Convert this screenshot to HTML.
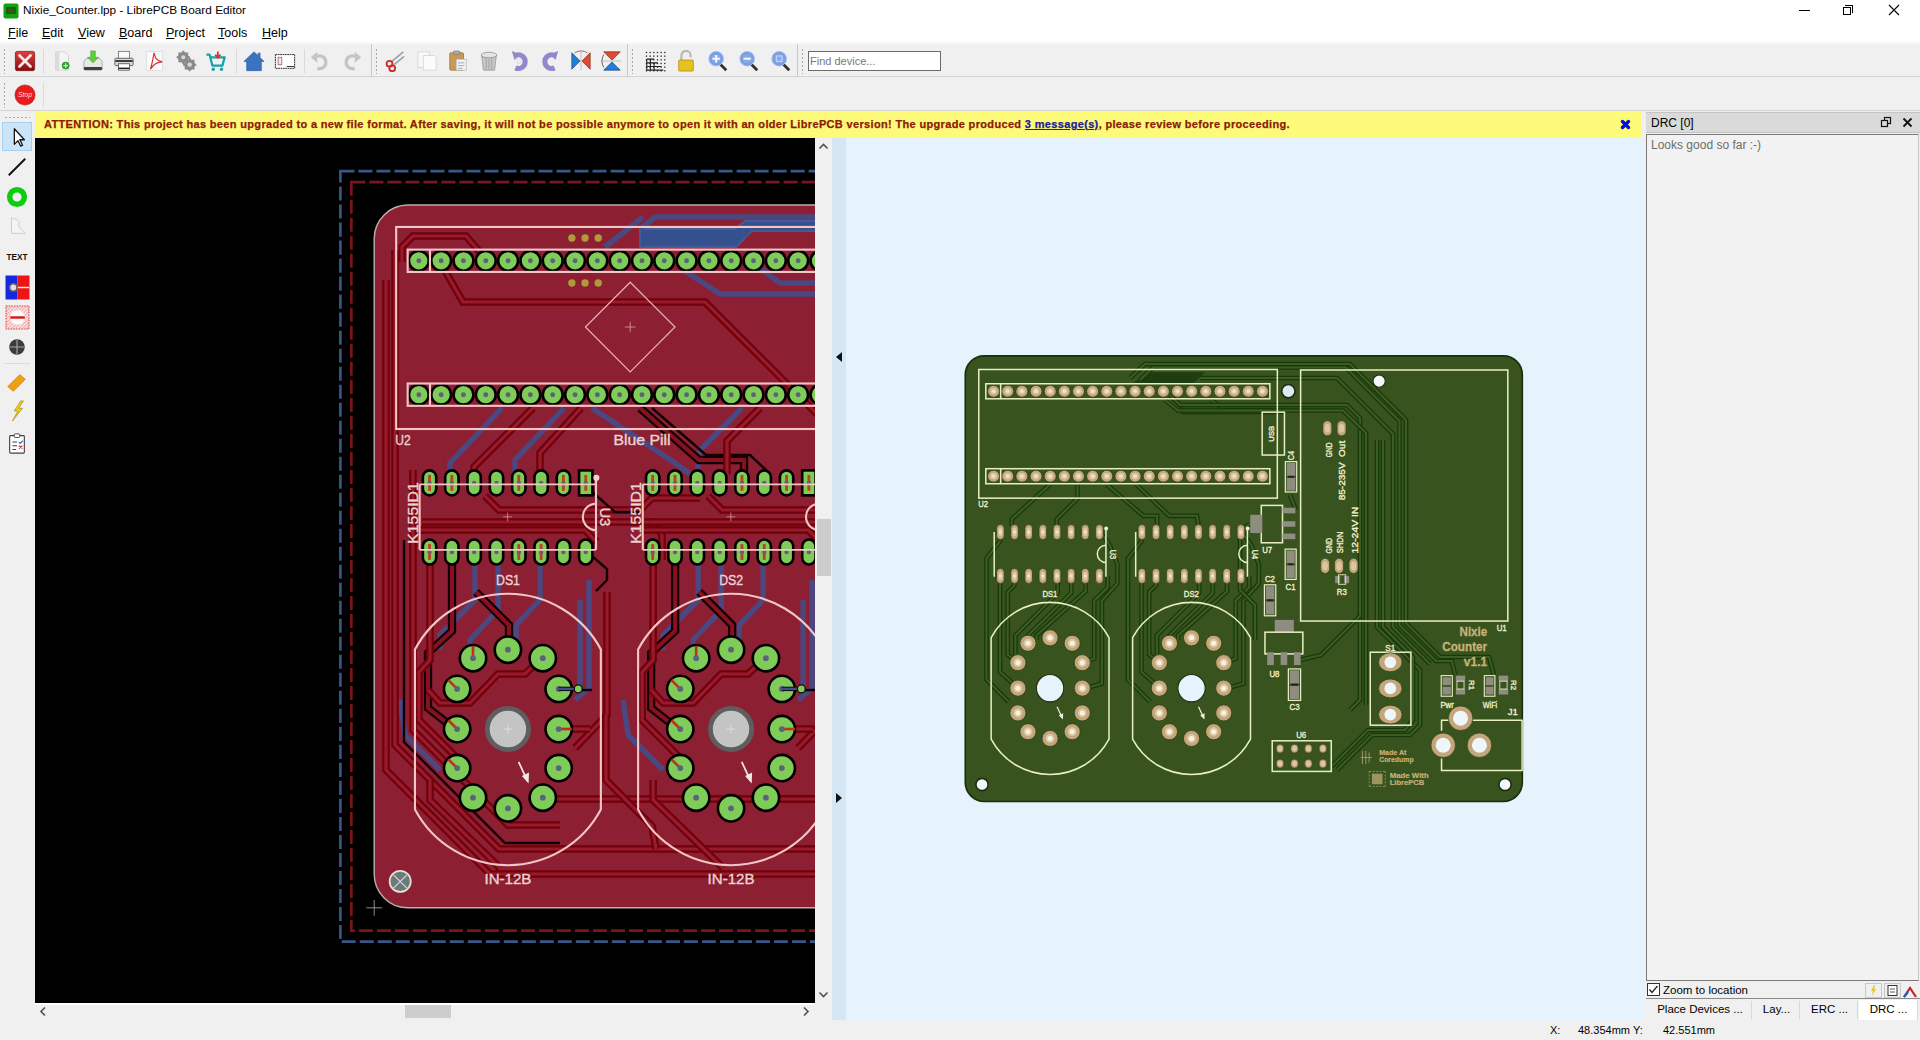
<!DOCTYPE html><html><head><meta charset="utf-8"><title>LibrePCB</title><style>
*{box-sizing:border-box}
html,body{margin:0;padding:0}
body{width:1920px;height:1040px;overflow:hidden;position:relative;background:#f0f0f0;font-family:"Liberation Sans",sans-serif;font-size:12px;color:#000}
.a{position:absolute}
.t{position:absolute;white-space:nowrap;line-height:1}
u{text-decoration:underline}
.grip{position:absolute;width:3px;background-image:radial-gradient(circle,#a8a8a8 0.8px,transparent 1.1px);background-size:3px 4px}
.gripx{position:absolute;height:3px;background-image:radial-gradient(circle,#a8a8a8 0.8px,transparent 1.1px);background-size:4px 3px}
.sep{position:absolute;width:1px;background:#dadada}
</style></head><body>
<div class="a" style="left:0;top:0;width:1920px;height:43px;background:#fff"></div>
<div class="a" style="left:0;top:41px;width:1920px;height:4px;background:linear-gradient(#fff,#f0f0f0)"></div>
<svg class="a" style="left:3px;top:3px" width="16" height="16"><rect x="0.5" y="0.5" width="15" height="15" rx="2" fill="#12a012"/><rect x="3" y="4" width="10" height="7" fill="#0a6a0a"/><rect x="5" y="6" width="6" height="3" fill="#7a3a1a"/></svg>
<div class="t" id="ttl" style="left:23px;top:5px;font-size:11.8px;color:#000">Nixie_Counter.lpp - LibrePCB Board Editor</div>
<div class="a" style="left:1799px;top:10px;width:11px;height:1px;background:#000"></div>
<div class="a" style="left:1845px;top:5px;width:8px;height:8px;border-top:1px solid #000;border-right:1px solid #000"></div>
<div class="a" style="left:1843px;top:7px;width:8px;height:8px;border:1px solid #000;background:#fff"></div>
<svg class="a" style="left:1888px;top:4px" width="12" height="12"><path d="M1 1L11 11M11 1L1 11" stroke="#000" stroke-width="1.1"/></svg>
<div class="t" style="left:8px;top:27px;font-size:12.5px"><u>F</u>ile</div>
<div class="t" style="left:42px;top:27px;font-size:12.5px"><u>E</u>dit</div>
<div class="t" style="left:78px;top:27px;font-size:12.5px"><u>V</u>iew</div>
<div class="t" style="left:119px;top:27px;font-size:12.5px"><u>B</u>oard</div>
<div class="t" style="left:166px;top:27px;font-size:12.5px"><u>P</u>roject</div>
<div class="t" style="left:218px;top:27px;font-size:12.5px"><u>T</u>ools</div>
<div class="t" style="left:262px;top:27px;font-size:12.5px"><u>H</u>elp</div>
<div class="a" style="left:0;top:76px;width:1920px;height:1px;background:#d4d4d4"></div>
<div class="a" style="left:0;top:110px;width:1920px;height:1px;background:#d4d4d4"></div>
<div class="grip" style="left:3px;top:48px;height:26px"></div>
<div class="grip" style="left:3px;top:82px;height:26px"></div>
<svg class="a" style="left:14.0px;top:50.0px" width="22" height="22" viewBox="0 0 24 24"><defs><linearGradient id="gc" x1="0" y1="0" x2="0" y2="1"><stop offset="0" stop-color="#e04040"/><stop offset="1" stop-color="#8a0c0c"/></linearGradient></defs>
<rect x="1.5" y="1.5" width="21" height="21" rx="2" fill="url(#gc)" stroke="#7a1010" stroke-width="0.8"/>
<path d="M6,6 L18,18 M18,6 L6,18" stroke="#f4eaea" stroke-width="3" stroke-linecap="round"/></svg>
<svg class="a" style="left:51.0px;top:50.0px" width="22" height="22" viewBox="0 0 24 24"><path d="M5,2 H15 L19,6 V22 H5 Z" fill="#f4f4f4" stroke="#c8c8c8" stroke-width="0.8"/>
<rect x="5" y="2" width="4" height="20" fill="#dcdcdc"/>
<circle cx="16" cy="17" r="4.2" fill="#2ea02e"/><path d="M16,14.5v5M13.5,17h5" stroke="#bff0bf" stroke-width="1.3"/></svg>
<svg class="a" style="left:82.0px;top:50.0px" width="22" height="22" viewBox="0 0 24 24"><path d="M2,15 Q2,9 7,9 H17 Q22,9 22,15 V21 H2 Z" fill="#e8e8e8" stroke="#9a9a9a" stroke-width="0.8"/>
<rect x="2" y="18.5" width="20" height="3.5" rx="1.2" fill="#404040"/>
<path d="M9.5,1 H14.5 V8 H18 L12,14 L6,8 H9.5 Z" fill="#5cd03c" stroke="#3a9a20" stroke-width="0.6"/></svg>
<svg class="a" style="left:113.0px;top:50.0px" width="22" height="22" viewBox="0 0 24 24"><rect x="6" y="1.5" width="12" height="8" fill="#fafafa" stroke="#707070" stroke-width="0.9"/>
<rect x="2" y="9" width="20" height="8" rx="1" fill="#d8d8d8" stroke="#505050" stroke-width="0.9"/>
<rect x="2.5" y="11" width="19" height="2" fill="#303030"/>
<rect x="6" y="15" width="12" height="7" fill="#ffffff" stroke="#505050" stroke-width="0.9"/>
<path d="M6,20h12" stroke="#202020" stroke-width="1.6"/></svg>
<svg class="a" style="left:144.0px;top:50.0px" width="22" height="22" viewBox="0 0 24 24"><rect x="3" y="1.5" width="17" height="21" fill="#fbfbfb" stroke="#d8d8d8" stroke-width="0.8"/>
<path d="M7,21 C9,15 10,8 11,3 C12,8 13,12 20,13 C14,13 10,16 7,21 Z" fill="none" stroke="#d03030" stroke-width="1.3"/></svg>
<svg class="a" style="left:175.0px;top:50.0px" width="22" height="22" viewBox="0 0 24 24"><g fill="#8a8a8a"><circle cx="9" cy="8" r="6"/><circle cx="16" cy="16" r="6"/></g>
<g fill="#d8d8d8"><circle cx="9" cy="8" r="2.2"/><circle cx="16" cy="16" r="2.4"/></g>
<g stroke="#8a8a8a" stroke-width="2.2"><path d="M9,0.8v14.4M1.8,8h14.4M4,3l10,10M14,3L4,13"/><path d="M16,8.8v14.4M8.8,16h14.4M11,11l10,10M21,11l-10,10"/></g>
<g fill="#d8d8d8"><circle cx="9" cy="8" r="2.2"/><circle cx="16" cy="16" r="2.4"/></g></svg>
<svg class="a" style="left:205.0px;top:50.0px" width="22" height="22" viewBox="0 0 24 24"><path d="M1.5,5 H5 L8,17 H19 L21.5,8 H6" fill="none" stroke="#18a0a8" stroke-width="2.4" stroke-linejoin="round"/>
<circle cx="9" cy="21" r="1.8" fill="#18a0a8"/><circle cx="18" cy="21" r="1.8" fill="#18a0a8"/>
<path d="M14,1.5 V7 M11.2,5 L14,8.5 L16.8,5" fill="none" stroke="#e03838" stroke-width="2"/></svg>
<svg class="a" style="left:243.0px;top:50.0px" width="22" height="22" viewBox="0 0 24 24"><path d="M12,2 L23,12.5 H20 V22.5 H4 V12.5 H1 Z" fill="#3a74c0" stroke="#2a5aa0" stroke-width="0.7"/>
<rect x="16" y="3" width="3" height="6" fill="#3a74c0"/></svg>
<svg class="a" style="left:274.0px;top:50.0px" width="22" height="22" viewBox="0 0 24 24"><rect x="1.5" y="5" width="21" height="15" fill="#fff" stroke="#222" stroke-width="1" stroke-dasharray="2 0.6"/>
<rect x="4.5" y="8" width="4" height="8" fill="#f4e8ec" stroke="#a07080" stroke-width="1"/>
<path d="M14,18h8" stroke="#222" stroke-width="1"/></svg>
<svg class="a" style="left:309.0px;top:50.0px" width="22" height="22" viewBox="0 0 24 24"><path d="M7,8 A7,7 0 1 1 9,20" fill="none" stroke="#c4c4c4" stroke-width="3.5"/>
<path d="M2,8 L9,2 V14 Z" fill="#c4c4c4"/></svg>
<svg class="a" style="left:341.0px;top:50.0px" width="22" height="22" viewBox="0 0 24 24"><path d="M17,8 A7,7 0 1 0 15,20" fill="none" stroke="#c4c4c4" stroke-width="3.5"/>
<path d="M22,8 L15,2 V14 Z" fill="#c4c4c4"/></svg>
<svg class="a" style="left:384.0px;top:50.0px" width="22" height="22" viewBox="0 0 24 24"><path d="M8,13 L21,2 M11,16 L22,7" stroke="#9aa0b0" stroke-width="1.8"/>
<circle cx="6" cy="15" r="3.2" fill="none" stroke="#d02828" stroke-width="2"/>
<circle cx="9" cy="20" r="3.2" fill="none" stroke="#d02828" stroke-width="2"/></svg>
<svg class="a" style="left:416.0px;top:50.0px" width="22" height="22" viewBox="0 0 24 24"><rect x="2" y="2" width="13" height="17" fill="#f8f8f8" stroke="#d4d4d4" stroke-width="0.9"/>
<path d="M8,6 H20 L22,8 V22 H8 Z" fill="#fbfbfb" stroke="#d4d4d4" stroke-width="0.9"/></svg>
<svg class="a" style="left:447.0px;top:50.0px" width="22" height="22" viewBox="0 0 24 24"><rect x="3" y="3" width="15" height="19" rx="1" fill="#c89a58" stroke="#9a7038" stroke-width="0.8"/>
<rect x="7" y="1" width="7" height="4" rx="1" fill="#a8a8a8" stroke="#707070" stroke-width="0.6"/>
<rect x="10" y="10" width="11" height="12" fill="#f2f2f2" stroke="#b0b0b0" stroke-width="0.7"/>
<path d="M12,14h7M12,17h7M12,20h5" stroke="#8aa0c0" stroke-width="0.9"/></svg>
<svg class="a" style="left:478.0px;top:50.0px" width="22" height="22" viewBox="0 0 24 24"><path d="M4,6 L6,22 H18 L20,6 Z" fill="#c8c8c8" stroke="#909090" stroke-width="0.8"/>
<ellipse cx="12" cy="5.5" rx="8.5" ry="3" fill="#e4e4e4" stroke="#8a8a8a" stroke-width="0.8"/>
<path d="M9,9v12M12,9v12M15,9v12" stroke="#a0a0a0" stroke-width="1"/></svg>
<svg class="a" style="left:509.0px;top:50.0px" width="22" height="22" viewBox="0 0 24 24"><path d="M8,5.5 A7.5,7.5 0 1 1 7,19.5" fill="none" stroke="#9488cc" stroke-width="5.5"/>
<path d="M8,12 A3,3 0 1 0 8,11" fill="none" stroke="#d8d0f0" stroke-width="1"/>
<path d="M3,1 L12,4.5 L6,11 Z" fill="#9488cc"/></svg>
<svg class="a" style="left:539.0px;top:50.0px" width="22" height="22" viewBox="0 0 24 24"><path d="M16,5.5 A7.5,7.5 0 1 0 17,19.5" fill="none" stroke="#9488cc" stroke-width="5.5"/>
<path d="M21,1 L12,4.5 L18,11 Z" fill="#9488cc"/></svg>
<svg class="a" style="left:570.0px;top:50.0px" width="22" height="22" viewBox="0 0 24 24"><path d="M2,3 L11,12 L2,21 Z" fill="#1e7ed8" stroke="#204a80" stroke-width="0.8"/>
<path d="M22,3 L13,12 L22,21 Z" fill="#e04a32" stroke="#803020" stroke-width="0.8"/>
<path d="M12,2v20" stroke="#b0b0b0" stroke-width="0.8"/><path d="M5,3 Q12,-1 19,3" fill="none" stroke="#804030" stroke-width="0.8"/></svg>
<svg class="a" style="left:601.0px;top:50.0px" width="22" height="22" viewBox="0 0 24 24"><path d="M3,2 L12,11 L21,2 Z" fill="#e04a32" stroke="#803020" stroke-width="0.8"/>
<path d="M3,22 L12,13 L21,22 Z" fill="#1e7ed8" stroke="#204a80" stroke-width="0.8"/>
<path d="M2,12h20" stroke="#b0b0b0" stroke-width="0.8"/><path d="M3,19 Q-1,12 3,5" fill="none" stroke="#303030" stroke-width="0.8"/></svg>
<svg class="a" style="left:644.0px;top:50.0px" width="22" height="22" viewBox="0 0 24 24"><g fill="#202020"><rect x="2" y="2" width="1.4" height="1.4"/><rect x="2" y="6" width="1.4" height="1.4"/><rect x="2" y="10" width="1.4" height="1.4"/><rect x="2" y="14" width="1.4" height="1.4"/><rect x="2" y="18" width="1.4" height="1.4"/><rect x="2" y="22" width="1.4" height="1.4"/><rect x="6" y="2" width="1.4" height="1.4"/><rect x="6" y="6" width="1.4" height="1.4"/><rect x="6" y="10" width="1.4" height="1.4"/><rect x="6" y="14" width="1.4" height="1.4"/><rect x="6" y="18" width="1.4" height="1.4"/><rect x="6" y="22" width="1.4" height="1.4"/><rect x="10" y="2" width="1.4" height="1.4"/><rect x="10" y="6" width="1.4" height="1.4"/><rect x="10" y="10" width="1.4" height="1.4"/><rect x="10" y="14" width="1.4" height="1.4"/><rect x="10" y="18" width="1.4" height="1.4"/><rect x="10" y="22" width="1.4" height="1.4"/><rect x="14" y="2" width="1.4" height="1.4"/><rect x="14" y="6" width="1.4" height="1.4"/><rect x="14" y="10" width="1.4" height="1.4"/><rect x="14" y="14" width="1.4" height="1.4"/><rect x="14" y="18" width="1.4" height="1.4"/><rect x="14" y="22" width="1.4" height="1.4"/><rect x="18" y="2" width="1.4" height="1.4"/><rect x="18" y="6" width="1.4" height="1.4"/><rect x="18" y="10" width="1.4" height="1.4"/><rect x="18" y="14" width="1.4" height="1.4"/><rect x="18" y="18" width="1.4" height="1.4"/><rect x="18" y="22" width="1.4" height="1.4"/><rect x="22" y="2" width="1.4" height="1.4"/><rect x="22" y="6" width="1.4" height="1.4"/><rect x="22" y="10" width="1.4" height="1.4"/><rect x="22" y="14" width="1.4" height="1.4"/><rect x="22" y="18" width="1.4" height="1.4"/><rect x="22" y="22" width="1.4" height="1.4"/></g>
<path d="M3,10 V22 M7,10 V22 M11,14 V22 M3,10 H11 M3,14 H15 M3,18 H19 M3,22 H21" stroke="#202020" stroke-width="1.2"/></svg>
<svg class="a" style="left:675.0px;top:50.0px" width="22" height="22" viewBox="0 0 24 24"><path d="M7,11 V6 A5,5 0 0 1 17,6 V8" fill="none" stroke="#b8b8b8" stroke-width="2.4"/>
<rect x="4" y="11" width="16" height="12" rx="1" fill="#e8c020" stroke="#b08a10" stroke-width="0.8"/></svg>
<svg class="a" style="left:707.0px;top:50.0px" width="22" height="22" viewBox="0 0 24 24"><path d="M14,15 L21,22" stroke="#303030" stroke-width="3"/>
<circle cx="10" cy="9.5" r="8" fill="#7a9ee0" stroke="#a8c0f0" stroke-width="1"/>
<circle cx="10" cy="9.5" r="5" fill="#8fb0f0" opacity="0.6"/><path d="M10,5.5v8M6,9.5h8" stroke="#f4f8ff" stroke-width="2.2"/></svg>
<svg class="a" style="left:738.0px;top:50.0px" width="22" height="22" viewBox="0 0 24 24"><path d="M14,15 L21,22" stroke="#303030" stroke-width="3"/>
<circle cx="10" cy="9.5" r="8" fill="#7a9ee0" stroke="#a8c0f0" stroke-width="1"/>
<circle cx="10" cy="9.5" r="5" fill="#8fb0f0" opacity="0.6"/><path d="M6,9.5h8" stroke="#f4f8ff" stroke-width="2.2"/></svg>
<svg class="a" style="left:770.0px;top:50.0px" width="22" height="22" viewBox="0 0 24 24"><path d="M14,15 L21,22" stroke="#303030" stroke-width="3"/>
<circle cx="10" cy="9.5" r="8" fill="#7a9ee0" stroke="#a8c0f0" stroke-width="1"/>
<circle cx="10" cy="9.5" r="5" fill="#8fb0f0" opacity="0.6"/><rect x="7" y="6.5" width="6" height="6" fill="none" stroke="#c0d4ff" stroke-width="1.2"/></svg>
<div class="sep" style="left:43px;top:49px;height:24px"></div>
<div class="sep" style="left:236px;top:49px;height:24px"></div>
<div class="sep" style="left:304px;top:49px;height:24px"></div>
<div class="a" style="left:371px;top:44px;width:1px;height:33px;background:#c8c8c8"></div>
<div class="grip" style="left:375px;top:48px;height:26px"></div>
<div class="a" style="left:627px;top:44px;width:1px;height:33px;background:#c8c8c8"></div>
<div class="grip" style="left:631px;top:48px;height:26px"></div>
<div class="a" style="left:797px;top:44px;width:1px;height:33px;background:#c8c8c8"></div>
<div class="grip" style="left:801px;top:48px;height:26px"></div>
<div class="sep" style="left:43px;top:83px;height:24px"></div>
<svg class="a" style="left:14.0px;top:83.5px" width="22" height="22" viewBox="0 0 24 24"><circle cx="12" cy="12" r="11" fill="#e81c1c" stroke="#b01010" stroke-width="0.6"/>
<text x="12" y="14.5" font-size="7.5" fill="#ffd8d8" text-anchor="middle" font-family="Liberation Sans" font-style="italic">Stop</text></svg>
<div class="a" style="left:808px;top:51px;width:133px;height:20px;background:#fff;border:1px solid #6a6a6a"></div>
<div class="t" style="left:810px;top:56px;font-size:11px;color:#777">Find device...</div>
<div class="gripx" style="left:4px;top:116px;width:26px"></div>
<div class="a" style="left:2px;top:122px;width:30px;height:29px;background:#cce4f7;border:1px solid #a8d0f0"></div>
<svg class="a" style="left:7.0px;top:126.0px" width="22" height="22" viewBox="0 0 24 24"><path d="M8,3 V20 L12,16 L15,22 L17,21 L14,15 L19,15 Z" fill="#fff" stroke="#111" stroke-width="1.4" stroke-linejoin="round"/></svg>
<svg class="a" style="left:6.0px;top:156.0px" width="22" height="22" viewBox="0 0 24 24"><path d="M3,21 L21,3" stroke="#111" stroke-width="2.2"/></svg>
<svg class="a" style="left:6.0px;top:186.0px" width="22" height="22" viewBox="0 0 24 24"><circle cx="12" cy="12" r="8" fill="none" stroke="#0ecc0e" stroke-width="6"/></svg>
<svg class="a" style="left:6.0px;top:216.0px" width="22" height="22" viewBox="0 0 24 24"><path d="M6,2 V19 H21 L14,12 V6 L12,4 Z" fill="#f4f4f4" stroke="#cacaca" stroke-width="1"/></svg>
<svg class="a" style="left:6.0px;top:245.0px" width="22" height="22" viewBox="0 0 24 24"><text x="12" y="16" font-size="9" font-weight="bold" fill="#111" text-anchor="middle" font-family="Liberation Sans">TEXT</text></svg>
<svg class="a" style="left:4.5px;top:274.5px" width="25" height="25" viewBox="0 0 24 24"><rect x="0.5" y="0.5" width="11.5" height="23" fill="#1428e0"/><rect x="12" y="0.5" width="11.5" height="23" fill="#ee1414"/>
<path d="M9,12 H23" stroke="#f0f0f0" stroke-width="1.4"/><circle cx="8" cy="12" r="3.6" fill="#e0e0e0" stroke="#606060" stroke-width="1.6"/></svg>
<svg class="a" style="left:4.5px;top:304.5px" width="25" height="25" viewBox="0 0 24 24"><defs><pattern id="hatch" width="2.5" height="2.5" patternUnits="userSpaceOnUse" patternTransform="rotate(45)"><rect width="2.5" height="2.5" fill="#f8dede"/><path d="M0,0V2.5" stroke="#e07070" stroke-width="0.8"/></pattern></defs>
<rect x="1" y="1" width="22" height="22" fill="url(#hatch)" stroke="#e04040" stroke-width="1" stroke-dasharray="1.5 1"/>
<circle cx="12" cy="12" r="7" fill="#fafafa"/><rect x="5" y="10.8" width="14" height="2.4" fill="#d02020"/></svg>
<svg class="a" style="left:6.0px;top:336.0px" width="22" height="22" viewBox="0 0 24 24"><circle cx="12" cy="12" r="8.5" fill="#3c3c3c"/><path d="M12,4v16M4,12h16" stroke="#a8a8a8" stroke-width="1.2"/></svg>
<svg class="a" style="left:6.0px;top:371.0px" width="22" height="22" viewBox="0 0 24 24"><path d="M2,17 L15,4 L21,9 L8,22 Z" fill="#f0a010" stroke="#c07800" stroke-width="0.8"/></svg>
<svg class="a" style="left:6.0px;top:400.0px" width="22" height="22" viewBox="0 0 24 24"><path d="M16,1 L9,12 H13 L7,23 L18,9 H14 L19,1 Z" fill="#f0d020" stroke="#a08010" stroke-width="0.7"/></svg>
<svg class="a" style="left:6.0px;top:432.0px" width="22" height="22" viewBox="0 0 24 24"><rect x="4" y="4" width="16" height="19" rx="1" fill="#fff" stroke="#404040" stroke-width="1.2"/>
<rect x="9" y="2" width="6" height="4" rx="1" fill="#fff" stroke="#404040" stroke-width="1"/>
<path d="M7,11h5M7,15h5M7,19h4" stroke="#404040" stroke-width="1.1"/><path d="M14,11l1.5,1.5 3-3" stroke="#2060c0" stroke-width="1.1" fill="none"/><path d="M14,15l4,3M18,15l-4,3" stroke="#d02020" stroke-width="1.1"/></svg>
<div class="a" style="left:4px;top:363px;width:26px;height:1px;background:#dcdcdc"></div>
<div class="a" style="left:35px;top:112px;width:1606px;height:26px;background:#fdfa7a"></div>
<div class="t" id="ban" style="left:44px;top:119px;font-size:11px;font-weight:bold;color:#8c1a04;letter-spacing:0.34px;-webkit-text-stroke:0.25px #8c1a04">ATTENTION: This project has been upgraded to a new file format. After saving, it will not be possible anymore to open it with an older LibrePCB version! The upgrade produced <u style="color:#1c1c98;-webkit-text-stroke:0.25px #1c1c98">3 message(s)</u>, please review before proceeding.</div>
<svg class="a" style="left:1620px;top:119px" width="11" height="11"><path d="M2.5,2.5L8.5,8.5M8.5,2.5L2.5,8.5" stroke="#0010d8" stroke-width="3.4" stroke-linecap="round"/></svg>
<div class="a" style="left:35px;top:138px;width:780px;height:865px;background:#000;overflow:hidden" id="lc"><svg class="a" style="left:0;top:0" width="780" height="865">
<g transform="translate(339.2,67) scale(8.785)">
<rect x="-3.85" y="-3.85" width="107.7" height="87.7" fill="none" stroke="#3a5684" stroke-width="0.3" stroke-dasharray="1.6 0.45"/>
<rect x="-2.6" y="-2.6" width="105.2" height="85.2" fill="none" stroke="#7c1519" stroke-width="0.3" stroke-dasharray="1.6 0.45"/>
<path d="M3.85,0 H96.15 A3.85,3.85 0 0 1 100,3.85 V76.15 A3.85,3.85 0 0 1 96.15,80 H3.85 A3.85,3.85 0 0 1 0,76.15 V3.85 A3.85,3.85 0 0 1 3.85,0 Z" fill="#8d1f33" stroke="#b9b0b0" stroke-width="0.16"/>
<path d="M30.256,4.781 L30.256,2.732 L41.070,2.732 L42.208,1.821 L50.746,1.821 L50.746,2.960 L43.005,2.960 L41.184,4.781Z" fill="#34508e" stroke="#4a5a96" stroke-width="0.2"/>
<path d="M26.272,4.781 L30.598,1.366" fill="none" stroke="#3f4f8e" stroke-opacity="0.85" stroke-width="0.62"/>
<path d="M35.037,7.285 L39.363,10.131 L50.746,10.131" fill="none" stroke="#3f4f8e" stroke-opacity="0.85" stroke-width="0.62"/>
<path d="M44.030,7.285 L46.192,8.879 L50.746,8.879" fill="none" stroke="#3f4f8e" stroke-opacity="0.85" stroke-width="0.62"/>
<path d="M50.746,1.366 L31.964,1.366 L30.256,2.732" fill="none" stroke="#3f4f8e" stroke-opacity="0.85" stroke-width="0.62"/>
<path d="M14.548,23.108 L8.628,29.368 L8.628,30.393" fill="none" stroke="#3f4f8e" stroke-opacity="0.85" stroke-width="0.62"/>
<path d="M21.605,23.108 L16.027,29.027 L16.027,30.620" fill="none" stroke="#3f4f8e" stroke-opacity="0.85" stroke-width="0.62"/>
<path d="M24.792,23.108 L34.240,29.368 L35.948,30.620" fill="none" stroke="#3f4f8e" stroke-opacity="0.85" stroke-width="0.62"/>
<path d="M41.867,23.108 L37.086,27.888 L36.744,30.620" fill="none" stroke="#3f4f8e" stroke-opacity="0.85" stroke-width="0.62"/>
<path d="M24.451,42.686 L24.451,54.980 L22.857,56.346" fill="none" stroke="#3f4f8e" stroke-opacity="0.85" stroke-width="0.62"/>
<path d="M23.426,44.963 L23.426,55.208" fill="none" stroke="#3f4f8e" stroke-opacity="0.85" stroke-width="0.62"/>
<path d="M11.474,40.637 L11.474,44.963 L7.490,48.947 L7.490,50.655" fill="none" stroke="#3f4f8e" stroke-opacity="0.85" stroke-width="0.62"/>
<path d="M14.092,40.637 L14.092,46.101 L10.905,49.516 L10.905,50.655" fill="none" stroke="#3f4f8e" stroke-opacity="0.85" stroke-width="0.62"/>
<path d="M18.873,40.637 L18.873,44.963 L16.141,47.809 L16.141,50.085" fill="none" stroke="#3f4f8e" stroke-opacity="0.85" stroke-width="0.62"/>
<path d="M7.490,64.314 L3.506,60.330 L2.937,56.346" fill="none" stroke="#3f4f8e" stroke-opacity="0.85" stroke-width="0.62"/>
<path d="M49.851,42.686 L49.851,54.980 L48.257,56.346" fill="none" stroke="#3f4f8e" stroke-opacity="0.85" stroke-width="0.62"/>
<path d="M48.826,44.963 L48.826,55.208" fill="none" stroke="#3f4f8e" stroke-opacity="0.85" stroke-width="0.62"/>
<path d="M36.874,40.637 L36.874,44.963 L32.890,48.947 L32.890,50.655" fill="none" stroke="#3f4f8e" stroke-opacity="0.85" stroke-width="0.62"/>
<path d="M39.492,40.637 L39.492,46.101 L36.305,49.516 L36.305,50.655" fill="none" stroke="#3f4f8e" stroke-opacity="0.85" stroke-width="0.62"/>
<path d="M44.273,40.637 L44.273,44.963 L41.541,47.809 L41.541,50.085" fill="none" stroke="#3f4f8e" stroke-opacity="0.85" stroke-width="0.62"/>
<path d="M32.890,64.314 L28.906,60.330 L28.337,56.346" fill="none" stroke="#3f4f8e" stroke-opacity="0.85" stroke-width="0.62"/>
<path d="M12.612,6.033 L10.450,3.529 L4.417,3.529 L3.164,4.781 L3.164,6.488" fill="none" stroke="#72000a" stroke-width="0.86"/>
<path d="M12.612,6.033 L10.450,3.529 L4.417,3.529 L3.164,4.781 L3.164,6.488" fill="none" stroke="#961b2d" stroke-width="0.36"/>
<path d="M7.490,6.488 L10.108,11.042 L37.655,11.042 L50.746,24.132" fill="none" stroke="#72000a" stroke-width="0.86"/>
<path d="M7.490,6.488 L10.108,11.042 L37.655,11.042 L50.746,24.132" fill="none" stroke="#961b2d" stroke-width="0.36"/>
<path d="M1.343,8.537 L1.343,64.314 L13.182,76.153 L50.746,76.153" fill="none" stroke="#72000a" stroke-width="0.86"/>
<path d="M1.343,8.537 L1.343,64.314 L13.182,76.153 L50.746,76.153" fill="none" stroke="#961b2d" stroke-width="0.36"/>
<path d="M2.368,5.122 L2.368,61.468 L14.206,73.307 L50.746,73.307" fill="none" stroke="#72000a" stroke-width="0.86"/>
<path d="M2.368,5.122 L2.368,61.468 L14.206,73.307 L50.746,73.307" fill="none" stroke="#961b2d" stroke-width="0.36"/>
<path d="M3.392,38.133 L3.392,61.127 L14.889,72.624 L21.150,72.624" fill="none" stroke="#120004" stroke-width="0.28"/>
<path d="M4.417,30.165 L4.417,59.761 L15.231,70.575 L21.150,70.575" fill="none" stroke="#72000a" stroke-width="0.86"/>
<path d="M4.417,30.165 L4.417,59.761 L15.231,70.575 L21.150,70.575" fill="none" stroke="#961b2d" stroke-width="0.36"/>
<path d="M18.076,23.108 L11.360,29.824 L11.360,30.620" fill="none" stroke="#72000a" stroke-width="0.86"/>
<path d="M18.076,23.108 L11.360,29.824 L11.360,30.620" fill="none" stroke="#961b2d" stroke-width="0.36"/>
<path d="M23.540,23.108 L18.873,28.230 L18.873,30.620" fill="none" stroke="#72000a" stroke-width="0.86"/>
<path d="M23.540,23.108 L18.873,28.230 L18.873,30.620" fill="none" stroke="#961b2d" stroke-width="0.36"/>
<path d="M30.256,23.108 L36.972,29.027 L42.094,29.027 L42.094,30.620" fill="none" stroke="#120004" stroke-width="0.95"/>
<path d="M30.256,23.108 L36.972,29.027 L42.094,29.027 L42.094,30.620" fill="none" stroke="#8a1020" stroke-width="0.45"/>
<path d="M31.622,23.108 L37.769,28.458 L42.777,28.458 L44.599,30.165" fill="none" stroke="#120004" stroke-width="0.28"/>
<path d="M43.916,23.108 L40.159,26.864 L40.159,30.620" fill="none" stroke="#72000a" stroke-width="0.86"/>
<path d="M43.916,23.108 L40.159,26.864 L40.159,30.620" fill="none" stroke="#961b2d" stroke-width="0.36"/>
<path d="M12.612,33.125 L14.206,34.718 L30.256,34.718 L31.622,33.352 L37.086,33.352" fill="none" stroke="#72000a" stroke-width="0.86"/>
<path d="M12.612,33.125 L14.206,34.718 L30.256,34.718 L31.622,33.352 L37.086,33.352" fill="none" stroke="#961b2d" stroke-width="0.36"/>
<path d="M5.441,36.084 L31.394,36.084 L32.760,37.450 L32.760,40.410" fill="none" stroke="#72000a" stroke-width="0.86"/>
<path d="M5.441,36.084 L31.394,36.084 L32.760,37.450 L32.760,40.410" fill="none" stroke="#961b2d" stroke-width="0.36"/>
<path d="M5.213,36.995 L23.995,36.995 L25.361,38.361" fill="none" stroke="#72000a" stroke-width="0.86"/>
<path d="M5.213,36.995 L23.995,36.995 L25.361,38.361" fill="none" stroke="#961b2d" stroke-width="0.36"/>
<path d="M24.109,39.385 L26.500,41.434 L26.500,42.686 L25.248,43.939" fill="none" stroke="#120004" stroke-width="0.28"/>
<path d="M24.565,32.442 L27.410,34.946 L30.256,34.946" fill="none" stroke="#120004" stroke-width="0.28"/>
<path d="M21.150,55.208 L24.792,55.208" fill="none" stroke="#120004" stroke-width="0.28"/>
<path d="M26.500,44.052 L26.500,58.054 L22.857,61.810" fill="none" stroke="#72000a" stroke-width="0.86"/>
<path d="M26.500,44.052 L26.500,58.054 L22.857,61.810" fill="none" stroke="#961b2d" stroke-width="0.36"/>
<path d="M21.150,59.647 L24.565,59.647" fill="none" stroke="#72000a" stroke-width="0.86"/>
<path d="M21.150,59.647 L24.565,59.647" fill="none" stroke="#961b2d" stroke-width="0.36"/>
<path d="M19.215,67.615 L50.746,67.615" fill="none" stroke="#72000a" stroke-width="0.86"/>
<path d="M19.215,67.615 L50.746,67.615" fill="none" stroke="#961b2d" stroke-width="0.36"/>
<path d="M26.386,58.054 L26.386,65.452 L31.622,70.689 L32.077,73.307" fill="none" stroke="#72000a" stroke-width="0.86"/>
<path d="M26.386,58.054 L26.386,65.452 L31.622,70.689 L32.077,73.307" fill="none" stroke="#961b2d" stroke-width="0.36"/>
<path d="M8.856,40.637 L8.856,48.492 L6.124,50.996 L6.124,57.257 L9.311,59.761" fill="none" stroke="#120004" stroke-width="0.95"/>
<path d="M8.856,40.637 L8.856,48.492 L6.124,50.996 L6.124,57.257 L9.311,59.761" fill="none" stroke="#8a1020" stroke-width="0.45"/>
<path d="M6.352,40.637 L6.352,51.793 L5.100,53.159 L5.100,58.623 L9.197,62.721 L9.539,64.200" fill="none" stroke="#72000a" stroke-width="0.86"/>
<path d="M6.352,40.637 L6.352,51.793 L5.100,53.159 L5.100,58.623 L9.197,62.721 L9.539,64.200" fill="none" stroke="#961b2d" stroke-width="0.36"/>
<path d="M19.101,51.565 L17.166,53.386 L14.092,53.386 L10.905,56.688 L7.490,56.688 L6.124,55.208" fill="none" stroke="#72000a" stroke-width="0.86"/>
<path d="M19.101,51.565 L17.166,53.386 L14.092,53.386 L10.905,56.688 L7.490,56.688 L6.124,55.208" fill="none" stroke="#961b2d" stroke-width="0.36"/>
<path d="M11.588,44.052 L15.344,47.809 L15.344,50.199" fill="none" stroke="#120004" stroke-width="0.95"/>
<path d="M11.588,44.052 L15.344,47.809 L15.344,50.199" fill="none" stroke="#8a1020" stroke-width="0.45"/>
<path d="M6.352,65.452 L6.352,67.729 L14.320,75.470" fill="none" stroke="#72000a" stroke-width="0.86"/>
<path d="M6.352,65.452 L6.352,67.729 L14.320,75.470" fill="none" stroke="#961b2d" stroke-width="0.36"/>
<path d="M38.012,33.125 L39.606,34.718 L55.656,34.718 L57.022,33.352 L62.486,33.352" fill="none" stroke="#72000a" stroke-width="0.86"/>
<path d="M38.012,33.125 L39.606,34.718 L55.656,34.718 L57.022,33.352 L62.486,33.352" fill="none" stroke="#961b2d" stroke-width="0.36"/>
<path d="M30.841,36.084 L56.794,36.084 L58.160,37.450 L58.160,40.410" fill="none" stroke="#72000a" stroke-width="0.86"/>
<path d="M30.841,36.084 L56.794,36.084 L58.160,37.450 L58.160,40.410" fill="none" stroke="#961b2d" stroke-width="0.36"/>
<path d="M30.613,36.995 L49.395,36.995 L50.761,38.361" fill="none" stroke="#72000a" stroke-width="0.86"/>
<path d="M30.613,36.995 L49.395,36.995 L50.761,38.361" fill="none" stroke="#961b2d" stroke-width="0.36"/>
<path d="M49.509,39.385 L51.900,41.434 L51.900,42.686 L50.648,43.939" fill="none" stroke="#120004" stroke-width="0.28"/>
<path d="M49.965,32.442 L52.810,34.946 L55.656,34.946" fill="none" stroke="#120004" stroke-width="0.28"/>
<path d="M46.550,55.208 L50.192,55.208" fill="none" stroke="#120004" stroke-width="0.28"/>
<path d="M51.900,44.052 L51.900,58.054 L48.257,61.810" fill="none" stroke="#72000a" stroke-width="0.86"/>
<path d="M51.900,44.052 L51.900,58.054 L48.257,61.810" fill="none" stroke="#961b2d" stroke-width="0.36"/>
<path d="M46.550,59.647 L49.965,59.647" fill="none" stroke="#72000a" stroke-width="0.86"/>
<path d="M46.550,59.647 L49.965,59.647" fill="none" stroke="#961b2d" stroke-width="0.36"/>
<path d="M44.615,67.615 L50.761,67.615" fill="none" stroke="#72000a" stroke-width="0.86"/>
<path d="M44.615,67.615 L50.761,67.615" fill="none" stroke="#961b2d" stroke-width="0.36"/>
<path d="M51.786,58.054 L51.786,65.452 L57.022,70.689 L57.477,73.307" fill="none" stroke="#72000a" stroke-width="0.86"/>
<path d="M51.786,58.054 L51.786,65.452 L57.022,70.689 L57.477,73.307" fill="none" stroke="#961b2d" stroke-width="0.36"/>
<path d="M34.256,40.637 L34.256,48.492 L31.524,50.996 L31.524,57.257 L34.711,59.761" fill="none" stroke="#120004" stroke-width="0.95"/>
<path d="M34.256,40.637 L34.256,48.492 L31.524,50.996 L31.524,57.257 L34.711,59.761" fill="none" stroke="#8a1020" stroke-width="0.45"/>
<path d="M31.752,40.637 L31.752,51.793 L30.500,53.159 L30.500,58.623 L34.597,62.721 L34.939,64.200" fill="none" stroke="#72000a" stroke-width="0.86"/>
<path d="M31.752,40.637 L31.752,51.793 L30.500,53.159 L30.500,58.623 L34.597,62.721 L34.939,64.200" fill="none" stroke="#961b2d" stroke-width="0.36"/>
<path d="M44.501,51.565 L42.566,53.386 L39.492,53.386 L36.305,56.688 L32.890,56.688 L31.524,55.208" fill="none" stroke="#72000a" stroke-width="0.86"/>
<path d="M44.501,51.565 L42.566,53.386 L39.492,53.386 L36.305,56.688 L32.890,56.688 L31.524,55.208" fill="none" stroke="#961b2d" stroke-width="0.36"/>
<path d="M36.988,44.052 L40.744,47.809 L40.744,50.199" fill="none" stroke="#120004" stroke-width="0.95"/>
<path d="M36.988,44.052 L40.744,47.809 L40.744,50.199" fill="none" stroke="#8a1020" stroke-width="0.45"/>
<path d="M31.752,65.452 L31.752,67.729 L39.720,75.470" fill="none" stroke="#72000a" stroke-width="0.86"/>
<path d="M31.752,65.452 L31.752,67.729 L39.720,75.470" fill="none" stroke="#961b2d" stroke-width="0.36"/>
<circle cx="5.08" cy="6.35" r="1.13" fill="#80cc58" stroke="#050000" stroke-width="0.3"/>
<circle cx="5.08" cy="6.35" r="0.28" fill="#5a6478"/>
<circle cx="7.62" cy="6.35" r="1.13" fill="#80cc58" stroke="#050000" stroke-width="0.3"/>
<circle cx="7.62" cy="6.35" r="0.28" fill="#5a6478"/>
<circle cx="10.16" cy="6.35" r="1.13" fill="#80cc58" stroke="#050000" stroke-width="0.3"/>
<circle cx="10.16" cy="6.35" r="0.28" fill="#5a6478"/>
<circle cx="12.7" cy="6.35" r="1.13" fill="#80cc58" stroke="#050000" stroke-width="0.3"/>
<circle cx="12.7" cy="6.35" r="0.28" fill="#5a6478"/>
<circle cx="15.24" cy="6.35" r="1.13" fill="#80cc58" stroke="#050000" stroke-width="0.3"/>
<circle cx="15.24" cy="6.35" r="0.28" fill="#5a6478"/>
<circle cx="17.78" cy="6.35" r="1.13" fill="#80cc58" stroke="#050000" stroke-width="0.3"/>
<circle cx="17.78" cy="6.35" r="0.28" fill="#5a6478"/>
<circle cx="20.32" cy="6.35" r="1.13" fill="#80cc58" stroke="#050000" stroke-width="0.3"/>
<circle cx="20.32" cy="6.35" r="0.28" fill="#5a6478"/>
<circle cx="22.86" cy="6.35" r="1.13" fill="#80cc58" stroke="#050000" stroke-width="0.3"/>
<circle cx="22.86" cy="6.35" r="0.28" fill="#5a6478"/>
<circle cx="25.4" cy="6.35" r="1.13" fill="#80cc58" stroke="#050000" stroke-width="0.3"/>
<circle cx="25.4" cy="6.35" r="0.28" fill="#5a6478"/>
<circle cx="27.94" cy="6.35" r="1.13" fill="#80cc58" stroke="#050000" stroke-width="0.3"/>
<circle cx="27.94" cy="6.35" r="0.28" fill="#5a6478"/>
<circle cx="30.48" cy="6.35" r="1.13" fill="#80cc58" stroke="#050000" stroke-width="0.3"/>
<circle cx="30.48" cy="6.35" r="0.28" fill="#5a6478"/>
<circle cx="33.02" cy="6.35" r="1.13" fill="#80cc58" stroke="#050000" stroke-width="0.3"/>
<circle cx="33.02" cy="6.35" r="0.28" fill="#5a6478"/>
<circle cx="35.56" cy="6.35" r="1.13" fill="#80cc58" stroke="#050000" stroke-width="0.3"/>
<circle cx="35.56" cy="6.35" r="0.28" fill="#5a6478"/>
<circle cx="38.1" cy="6.35" r="1.13" fill="#80cc58" stroke="#050000" stroke-width="0.3"/>
<circle cx="38.1" cy="6.35" r="0.28" fill="#5a6478"/>
<circle cx="40.64" cy="6.35" r="1.13" fill="#80cc58" stroke="#050000" stroke-width="0.3"/>
<circle cx="40.64" cy="6.35" r="0.28" fill="#5a6478"/>
<circle cx="43.18" cy="6.35" r="1.13" fill="#80cc58" stroke="#050000" stroke-width="0.3"/>
<circle cx="43.18" cy="6.35" r="0.28" fill="#5a6478"/>
<circle cx="45.72" cy="6.35" r="1.13" fill="#80cc58" stroke="#050000" stroke-width="0.3"/>
<circle cx="45.72" cy="6.35" r="0.28" fill="#5a6478"/>
<circle cx="48.26" cy="6.35" r="1.13" fill="#80cc58" stroke="#050000" stroke-width="0.3"/>
<circle cx="48.26" cy="6.35" r="0.28" fill="#5a6478"/>
<circle cx="50.8" cy="6.35" r="1.13" fill="#80cc58" stroke="#050000" stroke-width="0.3"/>
<circle cx="50.8" cy="6.35" r="0.28" fill="#5a6478"/>
<circle cx="53.34" cy="6.35" r="1.13" fill="#80cc58" stroke="#050000" stroke-width="0.3"/>
<circle cx="53.34" cy="6.35" r="0.28" fill="#5a6478"/>
<circle cx="5.08" cy="21.59" r="1.13" fill="#80cc58" stroke="#050000" stroke-width="0.3"/>
<circle cx="5.08" cy="21.59" r="0.28" fill="#5a6478"/>
<circle cx="7.62" cy="21.59" r="1.13" fill="#80cc58" stroke="#050000" stroke-width="0.3"/>
<circle cx="7.62" cy="21.59" r="0.28" fill="#5a6478"/>
<circle cx="10.16" cy="21.59" r="1.13" fill="#80cc58" stroke="#050000" stroke-width="0.3"/>
<circle cx="10.16" cy="21.59" r="0.28" fill="#5a6478"/>
<circle cx="12.7" cy="21.59" r="1.13" fill="#80cc58" stroke="#050000" stroke-width="0.3"/>
<circle cx="12.7" cy="21.59" r="0.28" fill="#5a6478"/>
<circle cx="15.24" cy="21.59" r="1.13" fill="#80cc58" stroke="#050000" stroke-width="0.3"/>
<circle cx="15.24" cy="21.59" r="0.28" fill="#5a6478"/>
<circle cx="17.78" cy="21.59" r="1.13" fill="#80cc58" stroke="#050000" stroke-width="0.3"/>
<circle cx="17.78" cy="21.59" r="0.28" fill="#5a6478"/>
<circle cx="20.32" cy="21.59" r="1.13" fill="#80cc58" stroke="#050000" stroke-width="0.3"/>
<circle cx="20.32" cy="21.59" r="0.28" fill="#5a6478"/>
<circle cx="22.86" cy="21.59" r="1.13" fill="#80cc58" stroke="#050000" stroke-width="0.3"/>
<circle cx="22.86" cy="21.59" r="0.28" fill="#5a6478"/>
<circle cx="25.4" cy="21.59" r="1.13" fill="#80cc58" stroke="#050000" stroke-width="0.3"/>
<circle cx="25.4" cy="21.59" r="0.28" fill="#5a6478"/>
<circle cx="27.94" cy="21.59" r="1.13" fill="#80cc58" stroke="#050000" stroke-width="0.3"/>
<circle cx="27.94" cy="21.59" r="0.28" fill="#5a6478"/>
<circle cx="30.48" cy="21.59" r="1.13" fill="#80cc58" stroke="#050000" stroke-width="0.3"/>
<circle cx="30.48" cy="21.59" r="0.28" fill="#5a6478"/>
<circle cx="33.02" cy="21.59" r="1.13" fill="#80cc58" stroke="#050000" stroke-width="0.3"/>
<circle cx="33.02" cy="21.59" r="0.28" fill="#5a6478"/>
<circle cx="35.56" cy="21.59" r="1.13" fill="#80cc58" stroke="#050000" stroke-width="0.3"/>
<circle cx="35.56" cy="21.59" r="0.28" fill="#5a6478"/>
<circle cx="38.1" cy="21.59" r="1.13" fill="#80cc58" stroke="#050000" stroke-width="0.3"/>
<circle cx="38.1" cy="21.59" r="0.28" fill="#5a6478"/>
<circle cx="40.64" cy="21.59" r="1.13" fill="#80cc58" stroke="#050000" stroke-width="0.3"/>
<circle cx="40.64" cy="21.59" r="0.28" fill="#5a6478"/>
<circle cx="43.18" cy="21.59" r="1.13" fill="#80cc58" stroke="#050000" stroke-width="0.3"/>
<circle cx="43.18" cy="21.59" r="0.28" fill="#5a6478"/>
<circle cx="45.72" cy="21.59" r="1.13" fill="#80cc58" stroke="#050000" stroke-width="0.3"/>
<circle cx="45.72" cy="21.59" r="0.28" fill="#5a6478"/>
<circle cx="48.26" cy="21.59" r="1.13" fill="#80cc58" stroke="#050000" stroke-width="0.3"/>
<circle cx="48.26" cy="21.59" r="0.28" fill="#5a6478"/>
<circle cx="50.8" cy="21.59" r="1.13" fill="#80cc58" stroke="#050000" stroke-width="0.3"/>
<circle cx="50.8" cy="21.59" r="0.28" fill="#5a6478"/>
<circle cx="53.34" cy="21.59" r="1.13" fill="#80cc58" stroke="#050000" stroke-width="0.3"/>
<circle cx="53.34" cy="21.59" r="0.28" fill="#5a6478"/>
<circle cx="22.5" cy="3.76" r="0.42" fill="#b09a3a"/>
<circle cx="24.0" cy="3.76" r="0.42" fill="#b09a3a"/>
<circle cx="25.5" cy="3.76" r="0.42" fill="#b09a3a"/>
<circle cx="22.5" cy="8.88" r="0.42" fill="#b09a3a"/>
<circle cx="24.0" cy="8.88" r="0.42" fill="#b09a3a"/>
<circle cx="25.5" cy="8.88" r="0.42" fill="#b09a3a"/>
<rect x="5.54" y="30.21" width="1.52" height="2.84" rx="0.76" ry="0.76" fill="#80cc58" stroke="#050000" stroke-width="0.3"/>
<path d="M6.3,30.73 v1.8" stroke="#b8441c" stroke-width="0.32"/>
<circle cx="6.3" cy="31.63" r="0.25" fill="#5a6478"/>
<rect x="5.54" y="38.08" width="1.52" height="2.84" rx="0.76" ry="0.76" fill="#80cc58" stroke="#050000" stroke-width="0.3"/>
<path d="M6.3,38.6 v1.8" stroke="#b8441c" stroke-width="0.32"/>
<circle cx="6.3" cy="39.5" r="0.25" fill="#5a6478"/>
<rect x="8.08" y="30.21" width="1.52" height="2.84" rx="0.76" ry="0.76" fill="#80cc58" stroke="#050000" stroke-width="0.3"/>
<path d="M8.84,30.73 v1.8" stroke="#b8441c" stroke-width="0.32"/>
<circle cx="8.84" cy="31.63" r="0.25" fill="#5a6478"/>
<rect x="8.08" y="38.08" width="1.52" height="2.84" rx="0.76" ry="0.76" fill="#80cc58" stroke="#050000" stroke-width="0.3"/>
<circle cx="8.84" cy="39.5" r="0.25" fill="#5a6478"/>
<rect x="10.62" y="30.21" width="1.52" height="2.84" rx="0.76" ry="0.76" fill="#80cc58" stroke="#050000" stroke-width="0.3"/>
<circle cx="11.38" cy="31.63" r="0.25" fill="#5a6478"/>
<rect x="10.62" y="38.08" width="1.52" height="2.84" rx="0.76" ry="0.76" fill="#80cc58" stroke="#050000" stroke-width="0.3"/>
<circle cx="11.38" cy="39.5" r="0.25" fill="#5a6478"/>
<rect x="13.16" y="30.21" width="1.52" height="2.84" rx="0.76" ry="0.76" fill="#80cc58" stroke="#050000" stroke-width="0.3"/>
<circle cx="13.92" cy="31.63" r="0.25" fill="#5a6478"/>
<rect x="13.16" y="38.08" width="1.52" height="2.84" rx="0.76" ry="0.76" fill="#80cc58" stroke="#050000" stroke-width="0.3"/>
<circle cx="13.92" cy="39.5" r="0.25" fill="#5a6478"/>
<rect x="15.7" y="30.21" width="1.52" height="2.84" rx="0.76" ry="0.76" fill="#80cc58" stroke="#050000" stroke-width="0.3"/>
<path d="M16.46,30.73 v1.8" stroke="#b8441c" stroke-width="0.32"/>
<circle cx="16.46" cy="31.63" r="0.25" fill="#5a6478"/>
<rect x="15.7" y="38.08" width="1.52" height="2.84" rx="0.76" ry="0.76" fill="#80cc58" stroke="#050000" stroke-width="0.3"/>
<path d="M16.46,38.6 v1.8" stroke="#b8441c" stroke-width="0.32"/>
<circle cx="16.46" cy="39.5" r="0.25" fill="#5a6478"/>
<rect x="18.24" y="30.21" width="1.52" height="2.84" rx="0.76" ry="0.76" fill="#80cc58" stroke="#050000" stroke-width="0.3"/>
<circle cx="19" cy="31.63" r="0.25" fill="#5a6478"/>
<rect x="18.24" y="38.08" width="1.52" height="2.84" rx="0.76" ry="0.76" fill="#80cc58" stroke="#050000" stroke-width="0.3"/>
<path d="M19,38.6 v1.8" stroke="#b8441c" stroke-width="0.32"/>
<circle cx="19" cy="39.5" r="0.25" fill="#5a6478"/>
<rect x="20.78" y="30.21" width="1.52" height="2.84" rx="0.76" ry="0.76" fill="#80cc58" stroke="#050000" stroke-width="0.3"/>
<path d="M21.54,30.73 v1.8" stroke="#b8441c" stroke-width="0.32"/>
<circle cx="21.54" cy="31.63" r="0.25" fill="#5a6478"/>
<rect x="20.78" y="38.08" width="1.52" height="2.84" rx="0.76" ry="0.76" fill="#80cc58" stroke="#050000" stroke-width="0.3"/>
<circle cx="21.54" cy="39.5" r="0.25" fill="#5a6478"/>
<rect x="23.32" y="30.21" width="1.52" height="2.84" rx="0" ry="0" fill="#80cc58" stroke="#050000" stroke-width="0.3"/>
<path d="M24.08,30.73 v1.8" stroke="#b8441c" stroke-width="0.32"/>
<circle cx="24.08" cy="31.63" r="0.25" fill="#5a6478"/>
<rect x="23.32" y="38.08" width="1.52" height="2.84" rx="0.76" ry="0.76" fill="#80cc58" stroke="#050000" stroke-width="0.3"/>
<circle cx="24.08" cy="39.5" r="0.25" fill="#5a6478"/>
<rect x="30.94" y="30.21" width="1.52" height="2.84" rx="0.76" ry="0.76" fill="#80cc58" stroke="#050000" stroke-width="0.3"/>
<path d="M31.7,30.73 v1.8" stroke="#b8441c" stroke-width="0.32"/>
<circle cx="31.7" cy="31.63" r="0.25" fill="#5a6478"/>
<rect x="30.94" y="38.08" width="1.52" height="2.84" rx="0.76" ry="0.76" fill="#80cc58" stroke="#050000" stroke-width="0.3"/>
<path d="M31.7,38.6 v1.8" stroke="#b8441c" stroke-width="0.32"/>
<circle cx="31.7" cy="39.5" r="0.25" fill="#5a6478"/>
<rect x="33.48" y="30.21" width="1.52" height="2.84" rx="0.76" ry="0.76" fill="#80cc58" stroke="#050000" stroke-width="0.3"/>
<path d="M34.24,30.73 v1.8" stroke="#b8441c" stroke-width="0.32"/>
<circle cx="34.24" cy="31.63" r="0.25" fill="#5a6478"/>
<rect x="33.48" y="38.08" width="1.52" height="2.84" rx="0.76" ry="0.76" fill="#80cc58" stroke="#050000" stroke-width="0.3"/>
<circle cx="34.24" cy="39.5" r="0.25" fill="#5a6478"/>
<rect x="36.02" y="30.21" width="1.52" height="2.84" rx="0.76" ry="0.76" fill="#80cc58" stroke="#050000" stroke-width="0.3"/>
<circle cx="36.78" cy="31.63" r="0.25" fill="#5a6478"/>
<rect x="36.02" y="38.08" width="1.52" height="2.84" rx="0.76" ry="0.76" fill="#80cc58" stroke="#050000" stroke-width="0.3"/>
<circle cx="36.78" cy="39.5" r="0.25" fill="#5a6478"/>
<rect x="38.56" y="30.21" width="1.52" height="2.84" rx="0.76" ry="0.76" fill="#80cc58" stroke="#050000" stroke-width="0.3"/>
<circle cx="39.32" cy="31.63" r="0.25" fill="#5a6478"/>
<rect x="38.56" y="38.08" width="1.52" height="2.84" rx="0.76" ry="0.76" fill="#80cc58" stroke="#050000" stroke-width="0.3"/>
<circle cx="39.32" cy="39.5" r="0.25" fill="#5a6478"/>
<rect x="41.1" y="30.21" width="1.52" height="2.84" rx="0.76" ry="0.76" fill="#80cc58" stroke="#050000" stroke-width="0.3"/>
<path d="M41.86,30.73 v1.8" stroke="#b8441c" stroke-width="0.32"/>
<circle cx="41.86" cy="31.63" r="0.25" fill="#5a6478"/>
<rect x="41.1" y="38.08" width="1.52" height="2.84" rx="0.76" ry="0.76" fill="#80cc58" stroke="#050000" stroke-width="0.3"/>
<path d="M41.86,38.6 v1.8" stroke="#b8441c" stroke-width="0.32"/>
<circle cx="41.86" cy="39.5" r="0.25" fill="#5a6478"/>
<rect x="43.64" y="30.21" width="1.52" height="2.84" rx="0.76" ry="0.76" fill="#80cc58" stroke="#050000" stroke-width="0.3"/>
<circle cx="44.4" cy="31.63" r="0.25" fill="#5a6478"/>
<rect x="43.64" y="38.08" width="1.52" height="2.84" rx="0.76" ry="0.76" fill="#80cc58" stroke="#050000" stroke-width="0.3"/>
<path d="M44.4,38.6 v1.8" stroke="#b8441c" stroke-width="0.32"/>
<circle cx="44.4" cy="39.5" r="0.25" fill="#5a6478"/>
<rect x="46.18" y="30.21" width="1.52" height="2.84" rx="0.76" ry="0.76" fill="#80cc58" stroke="#050000" stroke-width="0.3"/>
<path d="M46.94,30.73 v1.8" stroke="#b8441c" stroke-width="0.32"/>
<circle cx="46.94" cy="31.63" r="0.25" fill="#5a6478"/>
<rect x="46.18" y="38.08" width="1.52" height="2.84" rx="0.76" ry="0.76" fill="#80cc58" stroke="#050000" stroke-width="0.3"/>
<circle cx="46.94" cy="39.5" r="0.25" fill="#5a6478"/>
<rect x="48.72" y="30.21" width="1.52" height="2.84" rx="0" ry="0" fill="#80cc58" stroke="#050000" stroke-width="0.3"/>
<path d="M49.48,30.73 v1.8" stroke="#b8441c" stroke-width="0.32"/>
<circle cx="49.48" cy="31.63" r="0.25" fill="#5a6478"/>
<rect x="48.72" y="38.08" width="1.52" height="2.84" rx="0.76" ry="0.76" fill="#80cc58" stroke="#050000" stroke-width="0.3"/>
<circle cx="49.48" cy="39.5" r="0.25" fill="#5a6478"/>
<circle cx="15.22" cy="50.62" r="1.5" fill="#80cc58" stroke="#050000" stroke-width="0.3"/>
<circle cx="15.22" cy="50.62" r="0.33" fill="#5a6478"/>
<circle cx="19.19" cy="51.59" r="1.5" fill="#80cc58" stroke="#050000" stroke-width="0.3"/>
<circle cx="19.19" cy="51.59" r="0.33" fill="#5a6478"/>
<circle cx="21" cy="55.08" r="1.5" fill="#80cc58" stroke="#050000" stroke-width="0.3"/>
<circle cx="21" cy="55.08" r="0.33" fill="#5a6478"/>
<circle cx="21" cy="59.65" r="1.5" fill="#80cc58" stroke="#050000" stroke-width="0.3"/>
<path d="M21,59.65 l1.5,0" stroke="#b8341c" stroke-width="0.3"/>
<circle cx="21" cy="59.65" r="0.33" fill="#5a6478"/>
<circle cx="21" cy="64.1" r="1.5" fill="#80cc58" stroke="#050000" stroke-width="0.3"/>
<circle cx="21" cy="64.1" r="0.33" fill="#5a6478"/>
<circle cx="19.19" cy="67.47" r="1.5" fill="#80cc58" stroke="#050000" stroke-width="0.3"/>
<circle cx="19.19" cy="67.47" r="0.33" fill="#5a6478"/>
<circle cx="15.22" cy="68.68" r="1.5" fill="#80cc58" stroke="#050000" stroke-width="0.3"/>
<circle cx="15.22" cy="68.68" r="0.33" fill="#5a6478"/>
<circle cx="11.25" cy="67.47" r="1.5" fill="#80cc58" stroke="#050000" stroke-width="0.3"/>
<circle cx="11.25" cy="67.47" r="0.33" fill="#5a6478"/>
<circle cx="9.44" cy="64.1" r="1.5" fill="#80cc58" stroke="#050000" stroke-width="0.3"/>
<path d="M9.44,64.1 l-1,-1" stroke="#b8341c" stroke-width="0.3"/>
<circle cx="9.44" cy="64.1" r="0.33" fill="#5a6478"/>
<circle cx="9.44" cy="59.65" r="1.5" fill="#80cc58" stroke="#050000" stroke-width="0.3"/>
<path d="M9.44,59.65 l-1,-1" stroke="#b8341c" stroke-width="0.3"/>
<circle cx="9.44" cy="59.65" r="0.33" fill="#5a6478"/>
<circle cx="9.44" cy="55.08" r="1.5" fill="#80cc58" stroke="#050000" stroke-width="0.3"/>
<path d="M9.44,55.08 l-1,-1" stroke="#b8341c" stroke-width="0.3"/>
<circle cx="9.44" cy="55.08" r="0.33" fill="#5a6478"/>
<circle cx="11.25" cy="51.59" r="1.5" fill="#80cc58" stroke="#050000" stroke-width="0.3"/>
<path d="M11.25,51.59 l0,-1.4" stroke="#b8341c" stroke-width="0.3"/>
<circle cx="11.25" cy="51.59" r="0.33" fill="#5a6478"/>
<path d="M21,55.08 h2.2" stroke="#111" stroke-width="0.5"/><path d="M21,55.08 h2.2" stroke="#3f4f8e" stroke-width="0.25"/>
<circle cx="23.22" cy="55.08" r="0.45" fill="#80cc58" stroke="#111" stroke-width="0.15"/>
<circle cx="15.22" cy="59.65" r="2.35" fill="#c4c4c4" stroke="#5e5e5e" stroke-width="0.55"/>
<path d="M14.72,59.65h1M15.22,59.15v1" stroke="#e8e8e8" stroke-width="0.08"/>
<circle cx="40.62" cy="50.62" r="1.5" fill="#80cc58" stroke="#050000" stroke-width="0.3"/>
<circle cx="40.62" cy="50.62" r="0.33" fill="#5a6478"/>
<circle cx="44.59" cy="51.59" r="1.5" fill="#80cc58" stroke="#050000" stroke-width="0.3"/>
<circle cx="44.59" cy="51.59" r="0.33" fill="#5a6478"/>
<circle cx="46.4" cy="55.08" r="1.5" fill="#80cc58" stroke="#050000" stroke-width="0.3"/>
<circle cx="46.4" cy="55.08" r="0.33" fill="#5a6478"/>
<circle cx="46.4" cy="59.65" r="1.5" fill="#80cc58" stroke="#050000" stroke-width="0.3"/>
<path d="M46.4,59.65 l1.5,0" stroke="#b8341c" stroke-width="0.3"/>
<circle cx="46.4" cy="59.65" r="0.33" fill="#5a6478"/>
<circle cx="46.4" cy="64.1" r="1.5" fill="#80cc58" stroke="#050000" stroke-width="0.3"/>
<circle cx="46.4" cy="64.1" r="0.33" fill="#5a6478"/>
<circle cx="44.59" cy="67.47" r="1.5" fill="#80cc58" stroke="#050000" stroke-width="0.3"/>
<circle cx="44.59" cy="67.47" r="0.33" fill="#5a6478"/>
<circle cx="40.62" cy="68.68" r="1.5" fill="#80cc58" stroke="#050000" stroke-width="0.3"/>
<circle cx="40.62" cy="68.68" r="0.33" fill="#5a6478"/>
<circle cx="36.65" cy="67.47" r="1.5" fill="#80cc58" stroke="#050000" stroke-width="0.3"/>
<circle cx="36.65" cy="67.47" r="0.33" fill="#5a6478"/>
<circle cx="34.84" cy="64.1" r="1.5" fill="#80cc58" stroke="#050000" stroke-width="0.3"/>
<path d="M34.84,64.1 l-1,-1" stroke="#b8341c" stroke-width="0.3"/>
<circle cx="34.84" cy="64.1" r="0.33" fill="#5a6478"/>
<circle cx="34.84" cy="59.65" r="1.5" fill="#80cc58" stroke="#050000" stroke-width="0.3"/>
<path d="M34.84,59.65 l-1,-1" stroke="#b8341c" stroke-width="0.3"/>
<circle cx="34.84" cy="59.65" r="0.33" fill="#5a6478"/>
<circle cx="34.84" cy="55.08" r="1.5" fill="#80cc58" stroke="#050000" stroke-width="0.3"/>
<path d="M34.84,55.08 l-1,-1" stroke="#b8341c" stroke-width="0.3"/>
<circle cx="34.84" cy="55.08" r="0.33" fill="#5a6478"/>
<circle cx="36.65" cy="51.59" r="1.5" fill="#80cc58" stroke="#050000" stroke-width="0.3"/>
<path d="M36.65,51.59 l0,-1.4" stroke="#b8341c" stroke-width="0.3"/>
<circle cx="36.65" cy="51.59" r="0.33" fill="#5a6478"/>
<path d="M46.4,55.08 h2.2" stroke="#111" stroke-width="0.5"/><path d="M46.4,55.08 h2.2" stroke="#3f4f8e" stroke-width="0.25"/>
<circle cx="48.62" cy="55.08" r="0.45" fill="#80cc58" stroke="#111" stroke-width="0.15"/>
<circle cx="40.62" cy="59.65" r="2.35" fill="#c4c4c4" stroke="#5e5e5e" stroke-width="0.55"/>
<path d="M40.12,59.65h1M40.62,59.15v1" stroke="#e8e8e8" stroke-width="0.08"/>
<circle cx="2.96" cy="77.0" r="1.2" fill="#6e7a78" stroke="#e0e0d8" stroke-width="0.2"/>
<path d="M2.2,76.24L3.72,77.76M3.72,76.24L2.2,77.76" stroke="#d8e0e0" stroke-width="0.12"/>
<path d="M-0.9,80h1.8M0,79.1v1.8" stroke="#a0a0a0" stroke-width="0.1"/>
<rect x="2.5" y="2.5" width="53.5" height="23.0" fill="none" stroke="#f3c6c6" stroke-width="0.24"/>
<rect x="3.81" y="5.08" width="50.8" height="2.54" fill="none" stroke="#f3c6c6" stroke-width="0.24"/>
<rect x="3.81" y="20.32" width="50.8" height="2.54" fill="none" stroke="#f3c6c6" stroke-width="0.24"/>
<path d="M6.35,5.08v2.54M6.35,20.32v2.54" fill="none" stroke="#f3c6c6" stroke-width="0.24"/>
<path d="M29.14,8.79 L34.24,13.89 L29.14,18.99 L24.04,13.89 Z" fill="none" stroke="#e8b0b0" stroke-width="0.14"/>
<path d="M28.54,13.89h1.2M29.14,13.29v1.2" stroke="#e8b0b0" stroke-width="0.08"/>
<path d="M5.17,31.8 V39.25 M25.25,31.2 V39.25" fill="none" stroke="#f3c6c6" stroke-width="0.24"/>
<path d="M5.17,31.8 H25.25 M5.17,39.25 H25.25" fill="none" stroke="#f3c6c6" stroke-width="0.2"/>
<path d="M25.25,34.0 A1.5,1.5 0 0 0 25.25,37.0" fill="none" stroke="#f3c6c6" stroke-width="0.24"/>
<circle cx="25.29" cy="31.05" r="0.35" fill="#f3d0d0"/>
<text x="0" y="0" transform="translate(4.39,35.06) rotate(-90)" font-size="1.6" fill="#ecd2d2" text-anchor="middle" dominant-baseline="central" font-weight="normal" font-family="Liberation Sans" textLength="7" lengthAdjust="spacingAndGlyphs" stroke="#ecd2d2" stroke-width="0.04">K155ID1</text>
<text x="0" y="0" transform="translate(26.29,35.5) rotate(90)" font-size="1.6" fill="#ecd2d2" text-anchor="middle" dominant-baseline="central" font-weight="normal" font-family="Liberation Sans" textLength="2.16" lengthAdjust="spacingAndGlyphs" stroke="#ecd2d2" stroke-width="0.04">U3</text>
<text x="15.23" y="43.26" font-size="1.6" fill="#ecd2d2" text-anchor="middle" font-weight="normal" font-family="Liberation Sans" textLength="2.73" lengthAdjust="spacingAndGlyphs" stroke="#ecd2d2" stroke-width="0.04">DS1</text>
<path d="M14.69,35.5h1M15.19,35v1" stroke="#e0a0a0" stroke-width="0.08"/>
<path d="M30.57,31.8 V39.25 M50.65,31.2 V39.25" fill="none" stroke="#f3c6c6" stroke-width="0.24"/>
<path d="M30.57,31.8 H50.65 M30.57,39.25 H50.65" fill="none" stroke="#f3c6c6" stroke-width="0.2"/>
<path d="M50.65,34.0 A1.5,1.5 0 0 0 50.65,37.0" fill="none" stroke="#f3c6c6" stroke-width="0.24"/>
<circle cx="50.69" cy="31.05" r="0.35" fill="#f3d0d0"/>
<text x="0" y="0" transform="translate(29.79,35.06) rotate(-90)" font-size="1.6" fill="#ecd2d2" text-anchor="middle" dominant-baseline="central" font-weight="normal" font-family="Liberation Sans" textLength="7" lengthAdjust="spacingAndGlyphs" stroke="#ecd2d2" stroke-width="0.04">K155ID1</text>
<text x="0" y="0" transform="translate(51.69,35.5) rotate(90)" font-size="1.6" fill="#ecd2d2" text-anchor="middle" dominant-baseline="central" font-weight="normal" font-family="Liberation Sans" textLength="2.16" lengthAdjust="spacingAndGlyphs" stroke="#ecd2d2" stroke-width="0.04">U4</text>
<text x="40.63" y="43.26" font-size="1.6" fill="#ecd2d2" text-anchor="middle" font-weight="normal" font-family="Liberation Sans" textLength="2.73" lengthAdjust="spacingAndGlyphs" stroke="#ecd2d2" stroke-width="0.04">DS2</text>
<path d="M40.09,35.5h1M40.59,35v1" stroke="#e0a0a0" stroke-width="0.08"/>
<path d="M4.640,50.588 A12.0,12.0 0 0 1 25.800,50.588 L25.800,68.812 A12.0,12.0 0 0 1 4.640,68.812 Z" fill="none" stroke="#f3c6c6" stroke-width="0.24"/>
<path d="M16.44,63.4 L17.47,65.6" stroke="#f0e8e8" stroke-width="0.2"/>
<path d="M17.57,65.85 L16.82,65.0 L17.62,64.6 Z" fill="#f0e8e8"/>
<text x="15.22" y="77.27" font-size="1.6" fill="#ecd2d2" text-anchor="middle" font-weight="normal" font-family="Liberation Sans" textLength="5.34" lengthAdjust="spacingAndGlyphs" stroke="#ecd2d2" stroke-width="0.04">IN-12B</text>
<path d="M30.040,50.588 A12.0,12.0 0 0 1 51.200,50.588 L51.200,68.812 A12.0,12.0 0 0 1 30.040,68.812 Z" fill="none" stroke="#f3c6c6" stroke-width="0.24"/>
<path d="M41.84,63.4 L42.87,65.6" stroke="#f0e8e8" stroke-width="0.2"/>
<path d="M42.97,65.85 L42.22,65.0 L43.02,64.6 Z" fill="#f0e8e8"/>
<text x="40.62" y="77.27" font-size="1.6" fill="#ecd2d2" text-anchor="middle" font-weight="normal" font-family="Liberation Sans" textLength="5.34" lengthAdjust="spacingAndGlyphs" stroke="#ecd2d2" stroke-width="0.04">IN-12B</text>
<text x="2.41" y="27.3" font-size="1.6" fill="#ecd2d2" text-anchor="start" font-weight="normal" font-family="Liberation Sans" textLength="1.76" lengthAdjust="spacingAndGlyphs" stroke="#ecd2d2" stroke-width="0.04">U2</text>
<text x="27.23" y="27.3" font-size="1.6" fill="#ecd2d2" text-anchor="start" font-weight="normal" font-family="Liberation Sans" textLength="6.5" lengthAdjust="spacingAndGlyphs" stroke="#ecd2d2" stroke-width="0.04">Blue Pill</text>
</g></svg></div>
<div class="a" style="left:815px;top:138px;width:17px;height:865px;background:#f0f0f0"></div>
<div class="a" style="left:817px;top:519px;width:14px;height:57px;background:#cdcdcd"></div>
<svg class="a" style="left:817px;top:141px" width="13" height="10"><path d="M2.5,7.5L6.5,3.5L10.5,7.5" fill="none" stroke="#505050" stroke-width="1.6"/></svg>
<svg class="a" style="left:817px;top:990px" width="13" height="10"><path d="M2.5,2.5L6.5,6.5L10.5,2.5" fill="none" stroke="#505050" stroke-width="1.6"/></svg>
<div class="a" style="left:35px;top:1003px;width:780px;height:17px;background:#f0f0f0"></div>
<div class="a" style="left:35px;top:1003px;width:780px;height:2px;background:#fff"></div>
<div class="a" style="left:405px;top:1005px;width:46px;height:13px;background:#cdcdcd"></div>
<svg class="a" style="left:38px;top:1005px" width="10" height="13"><path d="M7,2.5L3,6.5L7,10.5" fill="none" stroke="#505050" stroke-width="1.6"/></svg>
<svg class="a" style="left:801px;top:1005px" width="10" height="13"><path d="M3,2.5L7,6.5L3,10.5" fill="none" stroke="#505050" stroke-width="1.6"/></svg>
<div class="a" style="left:832px;top:138px;width:14px;height:882px;background:#d5e6f5"></div>
<svg class="a" style="left:834px;top:351px" width="10" height="12"><path d="M8,1L2,6L8,11Z" fill="#111"/></svg>
<svg class="a" style="left:834px;top:792px" width="10" height="12"><path d="M2,1L8,6L2,11Z" fill="#111"/></svg>
<div class="a" style="left:846px;top:138px;width:798px;height:882px;background:#e6f2fc;overflow:hidden"><svg class="a" style="left:0;top:0" width="798" height="882">
<g transform="translate(119.3,217.9) scale(5.57)">
<path d="M3.4,0 H96.6 A3.4,3.4 0 0 1 100,3.4 V76.6 A3.4,3.4 0 0 1 96.6,80 H3.4 A3.4,3.4 0 0 1 0,76.6 V3.4 A3.4,3.4 0 0 1 3.4,0 Z" fill="#39531f" stroke="#17300c" stroke-width="0.3"/>
<path d="M30.2,4.9 L32.4,2.95 L43.0,2.95 L41.0,4.9 Z" fill="#1f3d10"/>
<path d="M15.171,23.106 L8.330,29.318 L8.330,30.539" fill="none" stroke="#173a0c" stroke-width="0.85"/>
<path d="M15.171,23.106 L8.330,29.318 L8.330,30.539" fill="none" stroke="#3d5c22" stroke-width="0.38"/>
<path d="M20.144,23.106 L20.144,25.601 L16.409,29.318 L16.409,30.539" fill="none" stroke="#173a0c" stroke-width="0.85"/>
<path d="M20.144,23.106 L20.144,25.601 L16.409,29.318 L16.409,30.539" fill="none" stroke="#3d5c22" stroke-width="0.38"/>
<path d="M25.422,23.106 L31.957,28.707 L34.434,28.707 L34.434,30.539" fill="none" stroke="#173a0c" stroke-width="0.85"/>
<path d="M25.422,23.106 L31.957,28.707 L34.434,28.707 L34.434,30.539" fill="none" stroke="#3d5c22" stroke-width="0.38"/>
<path d="M30.700,23.106 L36.607,28.707 L41.580,28.707 L41.885,30.539" fill="none" stroke="#173a0c" stroke-width="0.85"/>
<path d="M30.700,23.106 L36.607,28.707 L41.580,28.707 L41.885,30.539" fill="none" stroke="#3d5c22" stroke-width="0.38"/>
<path d="M36.607,7.882 L39.084,10.072 L57.397,10.072" fill="none" stroke="#173a0c" stroke-width="0.85"/>
<path d="M36.607,7.882 L39.084,10.072 L57.397,10.072" fill="none" stroke="#3d5c22" stroke-width="0.38"/>
<path d="M44.075,7.882 L45.907,9.120 L57.397,9.120" fill="none" stroke="#173a0c" stroke-width="0.85"/>
<path d="M44.075,7.882 L45.907,9.120 L57.397,9.120" fill="none" stroke="#3d5c22" stroke-width="0.38"/>
<path d="M6.230,31.526 L6.230,33.268 L3.806,36.373 L3.806,58.115 L7.792,62.083" fill="none" stroke="#173a0c" stroke-width="0.85"/>
<path d="M6.230,31.526 L6.230,33.268 L3.806,36.373 L3.806,58.115 L7.792,62.083" fill="none" stroke="#3d5c22" stroke-width="0.38"/>
<path d="M6.230,39.479 L6.230,56.732 L9.336,59.497" fill="none" stroke="#173a0c" stroke-width="0.85"/>
<path d="M6.230,39.479 L6.230,56.732 L9.336,59.497" fill="none" stroke="#3d5c22" stroke-width="0.38"/>
<path d="M8.815,39.479 L8.815,41.203 L7.612,42.406 L7.612,53.627 L9.515,55.189" fill="none" stroke="#173a0c" stroke-width="0.85"/>
<path d="M8.815,39.479 L8.815,41.203 L7.612,42.406 L7.612,53.627 L9.515,55.189" fill="none" stroke="#3d5c22" stroke-width="0.38"/>
<path d="M19.013,39.479 L19.013,42.585 L11.239,50.180 L11.239,51.724" fill="none" stroke="#173a0c" stroke-width="0.85"/>
<path d="M19.013,39.479 L19.013,42.585 L11.239,50.180 L11.239,51.724" fill="none" stroke="#3d5c22" stroke-width="0.38"/>
<path d="M16.589,39.479 L16.589,42.585 L8.995,50.180 L8.995,54.327" fill="none" stroke="#173a0c" stroke-width="0.85"/>
<path d="M16.589,39.479 L16.589,42.585 L8.995,50.180 L8.995,54.327" fill="none" stroke="#3d5c22" stroke-width="0.38"/>
<path d="M21.598,39.479 L21.598,42.244 L12.783,50.180 L12.783,51.005" fill="none" stroke="#173a0c" stroke-width="0.85"/>
<path d="M21.598,39.479 L21.598,42.244 L12.783,50.180 L12.783,51.005" fill="none" stroke="#3d5c22" stroke-width="0.38"/>
<path d="M24.183,31.526 L25.907,33.950 L27.289,37.397 L27.289,40.862 L24.524,43.968 L24.524,58.815 L21.077,59.838" fill="none" stroke="#173a0c" stroke-width="0.85"/>
<path d="M24.183,31.526 L25.907,33.950 L27.289,37.397 L27.289,40.862 L24.524,43.968 L24.524,58.815 L21.077,59.838" fill="none" stroke="#3d5c22" stroke-width="0.38"/>
<path d="M25.566,39.479 L25.566,41.544 L23.142,43.968 L23.142,54.327 L21.077,55.189" fill="none" stroke="#173a0c" stroke-width="0.85"/>
<path d="M25.566,39.479 L25.566,41.544 L23.142,43.968 L23.142,54.327 L21.077,55.189" fill="none" stroke="#3d5c22" stroke-width="0.38"/>
<path d="M31.634,31.526 L31.634,33.268 L29.210,36.373 L29.210,58.115 L33.196,62.083" fill="none" stroke="#173a0c" stroke-width="0.85"/>
<path d="M31.634,31.526 L31.634,33.268 L29.210,36.373 L29.210,58.115 L33.196,62.083" fill="none" stroke="#3d5c22" stroke-width="0.38"/>
<path d="M31.634,39.479 L31.634,56.732 L34.740,59.497" fill="none" stroke="#173a0c" stroke-width="0.85"/>
<path d="M31.634,39.479 L31.634,56.732 L34.740,59.497" fill="none" stroke="#3d5c22" stroke-width="0.38"/>
<path d="M34.219,39.479 L34.219,41.203 L33.016,42.406 L33.016,53.627 L34.919,55.189" fill="none" stroke="#173a0c" stroke-width="0.85"/>
<path d="M34.219,39.479 L34.219,41.203 L33.016,42.406 L33.016,53.627 L34.919,55.189" fill="none" stroke="#3d5c22" stroke-width="0.38"/>
<path d="M44.417,39.479 L44.417,42.585 L36.643,50.180 L36.643,51.724" fill="none" stroke="#173a0c" stroke-width="0.85"/>
<path d="M44.417,39.479 L44.417,42.585 L36.643,50.180 L36.643,51.724" fill="none" stroke="#3d5c22" stroke-width="0.38"/>
<path d="M41.993,39.479 L41.993,42.585 L34.399,50.180 L34.399,54.327" fill="none" stroke="#173a0c" stroke-width="0.85"/>
<path d="M41.993,39.479 L41.993,42.585 L34.399,50.180 L34.399,54.327" fill="none" stroke="#3d5c22" stroke-width="0.38"/>
<path d="M47.002,39.479 L47.002,42.244 L38.187,50.180 L38.187,51.005" fill="none" stroke="#173a0c" stroke-width="0.85"/>
<path d="M47.002,39.479 L47.002,42.244 L38.187,50.180 L38.187,51.005" fill="none" stroke="#3d5c22" stroke-width="0.38"/>
<path d="M49.587,31.526 L51.311,33.950 L52.693,37.397 L52.693,40.862 L49.928,43.968 L49.928,58.815 L46.481,59.838" fill="none" stroke="#173a0c" stroke-width="0.85"/>
<path d="M49.587,31.526 L51.311,33.950 L52.693,37.397 L52.693,40.862 L49.928,43.968 L49.928,58.815 L46.481,59.838" fill="none" stroke="#3d5c22" stroke-width="0.38"/>
<path d="M50.969,39.479 L50.969,41.544 L48.546,43.968 L48.546,54.327 L46.481,55.189" fill="none" stroke="#173a0c" stroke-width="0.85"/>
<path d="M50.969,39.479 L50.969,41.544 L48.546,43.968 L48.546,54.327 L46.481,55.189" fill="none" stroke="#3d5c22" stroke-width="0.38"/>
<path d="M29.569,3.968 L32.262,1.454 L69.066,1.454 L79.120,11.508 L79.120,47.953 L85.224,54.057 L94.022,54.057 L94.919,57.289" fill="none" stroke="#173a0c" stroke-width="0.85"/>
<path d="M29.569,3.968 L32.262,1.454 L69.066,1.454 L79.120,11.508 L79.120,47.953 L85.224,54.057 L94.022,54.057 L94.919,57.289" fill="none" stroke="#3d5c22" stroke-width="0.38"/>
<path d="M31.364,4.327 L33.698,2.083 L68.348,2.083 L77.953,11.688 L77.953,48.312 L84.506,54.776 L87.379,54.776 L87.917,57.289" fill="none" stroke="#173a0c" stroke-width="0.85"/>
<path d="M31.364,4.327 L33.698,2.083 L68.348,2.083 L77.953,11.688 L77.953,48.312 L84.506,54.776 L87.379,54.776 L87.917,57.289" fill="none" stroke="#3d5c22" stroke-width="0.38"/>
<path d="M42.136,3.968 L66.732,3.968 L76.786,14.022 L76.786,48.671 L83.429,55.314" fill="none" stroke="#173a0c" stroke-width="0.85"/>
<path d="M42.136,3.968 L66.732,3.968 L76.786,14.022 L76.786,48.671 L83.429,55.314" fill="none" stroke="#3d5c22" stroke-width="0.38"/>
<path d="M36.750,7.020 L38.546,8.815 L68.528,8.815 L70.862,11.149 L70.862,61.777 L69.066,63.573" fill="none" stroke="#173a0c" stroke-width="0.85"/>
<path d="M36.750,7.020 L38.546,8.815 L68.528,8.815 L70.862,11.149 L70.862,61.777 L69.066,63.573" fill="none" stroke="#3d5c22" stroke-width="0.38"/>
<path d="M35.853,7.917 L38.187,9.803 L67.810,9.803 L71.939,13.842 L71.939,62.675" fill="none" stroke="#173a0c" stroke-width="0.85"/>
<path d="M35.853,7.917 L38.187,9.803 L67.810,9.803 L71.939,13.842 L71.939,62.675" fill="none" stroke="#3d5c22" stroke-width="0.38"/>
<path d="M73.914,15.099 L73.914,48.671 L81.634,56.391 L81.634,66.266 L79.838,68.061 L73.016,68.061 L66.732,74.345" fill="none" stroke="#173a0c" stroke-width="0.85"/>
<path d="M73.914,15.099 L73.914,48.671 L81.634,56.391 L81.634,66.266 L79.838,68.061 L73.016,68.061 L66.732,74.345" fill="none" stroke="#3d5c22" stroke-width="0.38"/>
<path d="M74.991,15.099 L74.991,48.671 L80.377,54.057 L80.377,65.368 L78.941,67.163 L72.298,67.163 L65.835,73.627" fill="none" stroke="#173a0c" stroke-width="0.85"/>
<path d="M74.991,15.099 L74.991,48.671 L80.377,54.057 L80.377,65.368 L78.941,67.163 L72.298,67.163 L65.835,73.627" fill="none" stroke="#3d5c22" stroke-width="0.38"/>
<path d="M60.090,54.596 L63.860,53.698 L70.862,46.697" fill="none" stroke="#173a0c" stroke-width="0.85"/>
<path d="M60.090,54.596 L63.860,53.698 L70.862,46.697" fill="none" stroke="#3d5c22" stroke-width="0.38"/>
<path d="M58.294,24.973 L59.372,27.666" fill="none" stroke="#173a0c" stroke-width="0.85"/>
<path d="M58.294,24.973 L59.372,27.666" fill="none" stroke="#3d5c22" stroke-width="0.38"/>
<path d="M51.113,30.180 L49.318,31.257 L49.318,42.029 L52.011,44.722 L52.011,51.005" fill="none" stroke="#173a0c" stroke-width="0.85"/>
<path d="M51.113,30.180 L49.318,31.257 L49.318,42.029 L52.011,44.722 L52.011,51.005" fill="none" stroke="#3d5c22" stroke-width="0.38"/>
<circle cx="5.08" cy="6.35" r="1.08" fill="#c3a77a" stroke="#263a14" stroke-width="0.14"/>
<circle cx="5.08" cy="6.35" r="0.594" fill="#dcc8a0"/>
<circle cx="5.08" cy="6.35" r="0.3" fill="#efe4cc"/>
<circle cx="7.62" cy="6.35" r="1.08" fill="#c3a77a" stroke="#263a14" stroke-width="0.14"/>
<circle cx="7.62" cy="6.35" r="0.594" fill="#dcc8a0"/>
<circle cx="7.62" cy="6.35" r="0.3" fill="#efe4cc"/>
<circle cx="10.16" cy="6.35" r="1.08" fill="#c3a77a" stroke="#263a14" stroke-width="0.14"/>
<circle cx="10.16" cy="6.35" r="0.594" fill="#dcc8a0"/>
<circle cx="10.16" cy="6.35" r="0.3" fill="#efe4cc"/>
<circle cx="12.7" cy="6.35" r="1.08" fill="#c3a77a" stroke="#263a14" stroke-width="0.14"/>
<circle cx="12.7" cy="6.35" r="0.594" fill="#dcc8a0"/>
<circle cx="12.7" cy="6.35" r="0.3" fill="#efe4cc"/>
<circle cx="15.24" cy="6.35" r="1.08" fill="#c3a77a" stroke="#263a14" stroke-width="0.14"/>
<circle cx="15.24" cy="6.35" r="0.594" fill="#dcc8a0"/>
<circle cx="15.24" cy="6.35" r="0.3" fill="#efe4cc"/>
<circle cx="17.78" cy="6.35" r="1.08" fill="#c3a77a" stroke="#263a14" stroke-width="0.14"/>
<circle cx="17.78" cy="6.35" r="0.594" fill="#dcc8a0"/>
<circle cx="17.78" cy="6.35" r="0.3" fill="#efe4cc"/>
<circle cx="20.32" cy="6.35" r="1.08" fill="#c3a77a" stroke="#263a14" stroke-width="0.14"/>
<circle cx="20.32" cy="6.35" r="0.594" fill="#dcc8a0"/>
<circle cx="20.32" cy="6.35" r="0.3" fill="#efe4cc"/>
<circle cx="22.86" cy="6.35" r="1.08" fill="#c3a77a" stroke="#263a14" stroke-width="0.14"/>
<circle cx="22.86" cy="6.35" r="0.594" fill="#dcc8a0"/>
<circle cx="22.86" cy="6.35" r="0.3" fill="#efe4cc"/>
<circle cx="25.4" cy="6.35" r="1.08" fill="#c3a77a" stroke="#263a14" stroke-width="0.14"/>
<circle cx="25.4" cy="6.35" r="0.594" fill="#dcc8a0"/>
<circle cx="25.4" cy="6.35" r="0.3" fill="#efe4cc"/>
<circle cx="27.94" cy="6.35" r="1.08" fill="#c3a77a" stroke="#263a14" stroke-width="0.14"/>
<circle cx="27.94" cy="6.35" r="0.594" fill="#dcc8a0"/>
<circle cx="27.94" cy="6.35" r="0.3" fill="#efe4cc"/>
<circle cx="30.48" cy="6.35" r="1.08" fill="#c3a77a" stroke="#263a14" stroke-width="0.14"/>
<circle cx="30.48" cy="6.35" r="0.594" fill="#dcc8a0"/>
<circle cx="30.48" cy="6.35" r="0.3" fill="#efe4cc"/>
<circle cx="33.02" cy="6.35" r="1.08" fill="#c3a77a" stroke="#263a14" stroke-width="0.14"/>
<circle cx="33.02" cy="6.35" r="0.594" fill="#dcc8a0"/>
<circle cx="33.02" cy="6.35" r="0.3" fill="#efe4cc"/>
<circle cx="35.56" cy="6.35" r="1.08" fill="#c3a77a" stroke="#263a14" stroke-width="0.14"/>
<circle cx="35.56" cy="6.35" r="0.594" fill="#dcc8a0"/>
<circle cx="35.56" cy="6.35" r="0.3" fill="#efe4cc"/>
<circle cx="38.1" cy="6.35" r="1.08" fill="#c3a77a" stroke="#263a14" stroke-width="0.14"/>
<circle cx="38.1" cy="6.35" r="0.594" fill="#dcc8a0"/>
<circle cx="38.1" cy="6.35" r="0.3" fill="#efe4cc"/>
<circle cx="40.64" cy="6.35" r="1.08" fill="#c3a77a" stroke="#263a14" stroke-width="0.14"/>
<circle cx="40.64" cy="6.35" r="0.594" fill="#dcc8a0"/>
<circle cx="40.64" cy="6.35" r="0.3" fill="#efe4cc"/>
<circle cx="43.18" cy="6.35" r="1.08" fill="#c3a77a" stroke="#263a14" stroke-width="0.14"/>
<circle cx="43.18" cy="6.35" r="0.594" fill="#dcc8a0"/>
<circle cx="43.18" cy="6.35" r="0.3" fill="#efe4cc"/>
<circle cx="45.72" cy="6.35" r="1.08" fill="#c3a77a" stroke="#263a14" stroke-width="0.14"/>
<circle cx="45.72" cy="6.35" r="0.594" fill="#dcc8a0"/>
<circle cx="45.72" cy="6.35" r="0.3" fill="#efe4cc"/>
<circle cx="48.26" cy="6.35" r="1.08" fill="#c3a77a" stroke="#263a14" stroke-width="0.14"/>
<circle cx="48.26" cy="6.35" r="0.594" fill="#dcc8a0"/>
<circle cx="48.26" cy="6.35" r="0.3" fill="#efe4cc"/>
<circle cx="50.8" cy="6.35" r="1.08" fill="#c3a77a" stroke="#263a14" stroke-width="0.14"/>
<circle cx="50.8" cy="6.35" r="0.594" fill="#dcc8a0"/>
<circle cx="50.8" cy="6.35" r="0.3" fill="#efe4cc"/>
<circle cx="53.34" cy="6.35" r="1.08" fill="#c3a77a" stroke="#263a14" stroke-width="0.14"/>
<circle cx="53.34" cy="6.35" r="0.594" fill="#dcc8a0"/>
<circle cx="53.34" cy="6.35" r="0.3" fill="#efe4cc"/>
<circle cx="5.08" cy="21.59" r="1.08" fill="#c3a77a" stroke="#263a14" stroke-width="0.14"/>
<circle cx="5.08" cy="21.59" r="0.594" fill="#dcc8a0"/>
<circle cx="5.08" cy="21.59" r="0.3" fill="#efe4cc"/>
<circle cx="7.62" cy="21.59" r="1.08" fill="#c3a77a" stroke="#263a14" stroke-width="0.14"/>
<circle cx="7.62" cy="21.59" r="0.594" fill="#dcc8a0"/>
<circle cx="7.62" cy="21.59" r="0.3" fill="#efe4cc"/>
<circle cx="10.16" cy="21.59" r="1.08" fill="#c3a77a" stroke="#263a14" stroke-width="0.14"/>
<circle cx="10.16" cy="21.59" r="0.594" fill="#dcc8a0"/>
<circle cx="10.16" cy="21.59" r="0.3" fill="#efe4cc"/>
<circle cx="12.7" cy="21.59" r="1.08" fill="#c3a77a" stroke="#263a14" stroke-width="0.14"/>
<circle cx="12.7" cy="21.59" r="0.594" fill="#dcc8a0"/>
<circle cx="12.7" cy="21.59" r="0.3" fill="#efe4cc"/>
<circle cx="15.24" cy="21.59" r="1.08" fill="#c3a77a" stroke="#263a14" stroke-width="0.14"/>
<circle cx="15.24" cy="21.59" r="0.594" fill="#dcc8a0"/>
<circle cx="15.24" cy="21.59" r="0.3" fill="#efe4cc"/>
<circle cx="17.78" cy="21.59" r="1.08" fill="#c3a77a" stroke="#263a14" stroke-width="0.14"/>
<circle cx="17.78" cy="21.59" r="0.594" fill="#dcc8a0"/>
<circle cx="17.78" cy="21.59" r="0.3" fill="#efe4cc"/>
<circle cx="20.32" cy="21.59" r="1.08" fill="#c3a77a" stroke="#263a14" stroke-width="0.14"/>
<circle cx="20.32" cy="21.59" r="0.594" fill="#dcc8a0"/>
<circle cx="20.32" cy="21.59" r="0.3" fill="#efe4cc"/>
<circle cx="22.86" cy="21.59" r="1.08" fill="#c3a77a" stroke="#263a14" stroke-width="0.14"/>
<circle cx="22.86" cy="21.59" r="0.594" fill="#dcc8a0"/>
<circle cx="22.86" cy="21.59" r="0.3" fill="#efe4cc"/>
<circle cx="25.4" cy="21.59" r="1.08" fill="#c3a77a" stroke="#263a14" stroke-width="0.14"/>
<circle cx="25.4" cy="21.59" r="0.594" fill="#dcc8a0"/>
<circle cx="25.4" cy="21.59" r="0.3" fill="#efe4cc"/>
<circle cx="27.94" cy="21.59" r="1.08" fill="#c3a77a" stroke="#263a14" stroke-width="0.14"/>
<circle cx="27.94" cy="21.59" r="0.594" fill="#dcc8a0"/>
<circle cx="27.94" cy="21.59" r="0.3" fill="#efe4cc"/>
<circle cx="30.48" cy="21.59" r="1.08" fill="#c3a77a" stroke="#263a14" stroke-width="0.14"/>
<circle cx="30.48" cy="21.59" r="0.594" fill="#dcc8a0"/>
<circle cx="30.48" cy="21.59" r="0.3" fill="#efe4cc"/>
<circle cx="33.02" cy="21.59" r="1.08" fill="#c3a77a" stroke="#263a14" stroke-width="0.14"/>
<circle cx="33.02" cy="21.59" r="0.594" fill="#dcc8a0"/>
<circle cx="33.02" cy="21.59" r="0.3" fill="#efe4cc"/>
<circle cx="35.56" cy="21.59" r="1.08" fill="#c3a77a" stroke="#263a14" stroke-width="0.14"/>
<circle cx="35.56" cy="21.59" r="0.594" fill="#dcc8a0"/>
<circle cx="35.56" cy="21.59" r="0.3" fill="#efe4cc"/>
<circle cx="38.1" cy="21.59" r="1.08" fill="#c3a77a" stroke="#263a14" stroke-width="0.14"/>
<circle cx="38.1" cy="21.59" r="0.594" fill="#dcc8a0"/>
<circle cx="38.1" cy="21.59" r="0.3" fill="#efe4cc"/>
<circle cx="40.64" cy="21.59" r="1.08" fill="#c3a77a" stroke="#263a14" stroke-width="0.14"/>
<circle cx="40.64" cy="21.59" r="0.594" fill="#dcc8a0"/>
<circle cx="40.64" cy="21.59" r="0.3" fill="#efe4cc"/>
<circle cx="43.18" cy="21.59" r="1.08" fill="#c3a77a" stroke="#263a14" stroke-width="0.14"/>
<circle cx="43.18" cy="21.59" r="0.594" fill="#dcc8a0"/>
<circle cx="43.18" cy="21.59" r="0.3" fill="#efe4cc"/>
<circle cx="45.72" cy="21.59" r="1.08" fill="#c3a77a" stroke="#263a14" stroke-width="0.14"/>
<circle cx="45.72" cy="21.59" r="0.594" fill="#dcc8a0"/>
<circle cx="45.72" cy="21.59" r="0.3" fill="#efe4cc"/>
<circle cx="48.26" cy="21.59" r="1.08" fill="#c3a77a" stroke="#263a14" stroke-width="0.14"/>
<circle cx="48.26" cy="21.59" r="0.594" fill="#dcc8a0"/>
<circle cx="48.26" cy="21.59" r="0.3" fill="#efe4cc"/>
<circle cx="50.8" cy="21.59" r="1.08" fill="#c3a77a" stroke="#263a14" stroke-width="0.14"/>
<circle cx="50.8" cy="21.59" r="0.594" fill="#dcc8a0"/>
<circle cx="50.8" cy="21.59" r="0.3" fill="#efe4cc"/>
<circle cx="53.34" cy="21.59" r="1.08" fill="#c3a77a" stroke="#263a14" stroke-width="0.14"/>
<circle cx="53.34" cy="21.59" r="0.594" fill="#dcc8a0"/>
<circle cx="53.34" cy="21.59" r="0.3" fill="#efe4cc"/>
<rect x="5.62" y="30.28" width="1.36" height="2.7" rx="0.68" ry="0.68" fill="#c3a77a" stroke="#263a14" stroke-width="0.12"/>
<ellipse cx="6.3" cy="31.63" rx="0.4" ry="0.8" fill="#dcc8a0"/>
<circle cx="6.3" cy="31.63" r="0.28" fill="#efe4cc"/>
<rect x="5.62" y="38.15" width="1.36" height="2.7" rx="0.68" ry="0.68" fill="#c3a77a" stroke="#263a14" stroke-width="0.12"/>
<ellipse cx="6.3" cy="39.5" rx="0.4" ry="0.8" fill="#dcc8a0"/>
<circle cx="6.3" cy="39.5" r="0.28" fill="#efe4cc"/>
<rect x="8.16" y="30.28" width="1.36" height="2.7" rx="0.68" ry="0.68" fill="#c3a77a" stroke="#263a14" stroke-width="0.12"/>
<ellipse cx="8.84" cy="31.63" rx="0.4" ry="0.8" fill="#dcc8a0"/>
<circle cx="8.84" cy="31.63" r="0.28" fill="#efe4cc"/>
<rect x="8.16" y="38.15" width="1.36" height="2.7" rx="0.68" ry="0.68" fill="#c3a77a" stroke="#263a14" stroke-width="0.12"/>
<ellipse cx="8.84" cy="39.5" rx="0.4" ry="0.8" fill="#dcc8a0"/>
<circle cx="8.84" cy="39.5" r="0.28" fill="#efe4cc"/>
<rect x="10.7" y="30.28" width="1.36" height="2.7" rx="0.68" ry="0.68" fill="#c3a77a" stroke="#263a14" stroke-width="0.12"/>
<ellipse cx="11.38" cy="31.63" rx="0.4" ry="0.8" fill="#dcc8a0"/>
<circle cx="11.38" cy="31.63" r="0.28" fill="#efe4cc"/>
<rect x="10.7" y="38.15" width="1.36" height="2.7" rx="0.68" ry="0.68" fill="#c3a77a" stroke="#263a14" stroke-width="0.12"/>
<ellipse cx="11.38" cy="39.5" rx="0.4" ry="0.8" fill="#dcc8a0"/>
<circle cx="11.38" cy="39.5" r="0.28" fill="#efe4cc"/>
<rect x="13.24" y="30.28" width="1.36" height="2.7" rx="0.68" ry="0.68" fill="#c3a77a" stroke="#263a14" stroke-width="0.12"/>
<ellipse cx="13.92" cy="31.63" rx="0.4" ry="0.8" fill="#dcc8a0"/>
<circle cx="13.92" cy="31.63" r="0.28" fill="#efe4cc"/>
<rect x="13.24" y="38.15" width="1.36" height="2.7" rx="0.68" ry="0.68" fill="#c3a77a" stroke="#263a14" stroke-width="0.12"/>
<ellipse cx="13.92" cy="39.5" rx="0.4" ry="0.8" fill="#dcc8a0"/>
<circle cx="13.92" cy="39.5" r="0.28" fill="#efe4cc"/>
<rect x="15.78" y="30.28" width="1.36" height="2.7" rx="0.68" ry="0.68" fill="#c3a77a" stroke="#263a14" stroke-width="0.12"/>
<ellipse cx="16.46" cy="31.63" rx="0.4" ry="0.8" fill="#dcc8a0"/>
<circle cx="16.46" cy="31.63" r="0.28" fill="#efe4cc"/>
<rect x="15.78" y="38.15" width="1.36" height="2.7" rx="0.68" ry="0.68" fill="#c3a77a" stroke="#263a14" stroke-width="0.12"/>
<ellipse cx="16.46" cy="39.5" rx="0.4" ry="0.8" fill="#dcc8a0"/>
<circle cx="16.46" cy="39.5" r="0.28" fill="#efe4cc"/>
<rect x="18.32" y="30.28" width="1.36" height="2.7" rx="0.68" ry="0.68" fill="#c3a77a" stroke="#263a14" stroke-width="0.12"/>
<ellipse cx="19" cy="31.63" rx="0.4" ry="0.8" fill="#dcc8a0"/>
<circle cx="19" cy="31.63" r="0.28" fill="#efe4cc"/>
<rect x="18.32" y="38.15" width="1.36" height="2.7" rx="0.68" ry="0.68" fill="#c3a77a" stroke="#263a14" stroke-width="0.12"/>
<ellipse cx="19" cy="39.5" rx="0.4" ry="0.8" fill="#dcc8a0"/>
<circle cx="19" cy="39.5" r="0.28" fill="#efe4cc"/>
<rect x="20.86" y="30.28" width="1.36" height="2.7" rx="0.68" ry="0.68" fill="#c3a77a" stroke="#263a14" stroke-width="0.12"/>
<ellipse cx="21.54" cy="31.63" rx="0.4" ry="0.8" fill="#dcc8a0"/>
<circle cx="21.54" cy="31.63" r="0.28" fill="#efe4cc"/>
<rect x="20.86" y="38.15" width="1.36" height="2.7" rx="0.68" ry="0.68" fill="#c3a77a" stroke="#263a14" stroke-width="0.12"/>
<ellipse cx="21.54" cy="39.5" rx="0.4" ry="0.8" fill="#dcc8a0"/>
<circle cx="21.54" cy="39.5" r="0.28" fill="#efe4cc"/>
<rect x="23.4" y="30.28" width="1.36" height="2.7" rx="0.68" ry="0.68" fill="#c3a77a" stroke="#263a14" stroke-width="0.12"/>
<ellipse cx="24.08" cy="31.63" rx="0.4" ry="0.8" fill="#dcc8a0"/>
<circle cx="24.08" cy="31.63" r="0.28" fill="#efe4cc"/>
<rect x="23.4" y="38.15" width="1.36" height="2.7" rx="0.68" ry="0.68" fill="#c3a77a" stroke="#263a14" stroke-width="0.12"/>
<ellipse cx="24.08" cy="39.5" rx="0.4" ry="0.8" fill="#dcc8a0"/>
<circle cx="24.08" cy="39.5" r="0.28" fill="#efe4cc"/>
<rect x="31.02" y="30.28" width="1.36" height="2.7" rx="0.68" ry="0.68" fill="#c3a77a" stroke="#263a14" stroke-width="0.12"/>
<ellipse cx="31.7" cy="31.63" rx="0.4" ry="0.8" fill="#dcc8a0"/>
<circle cx="31.7" cy="31.63" r="0.28" fill="#efe4cc"/>
<rect x="31.02" y="38.15" width="1.36" height="2.7" rx="0.68" ry="0.68" fill="#c3a77a" stroke="#263a14" stroke-width="0.12"/>
<ellipse cx="31.7" cy="39.5" rx="0.4" ry="0.8" fill="#dcc8a0"/>
<circle cx="31.7" cy="39.5" r="0.28" fill="#efe4cc"/>
<rect x="33.56" y="30.28" width="1.36" height="2.7" rx="0.68" ry="0.68" fill="#c3a77a" stroke="#263a14" stroke-width="0.12"/>
<ellipse cx="34.24" cy="31.63" rx="0.4" ry="0.8" fill="#dcc8a0"/>
<circle cx="34.24" cy="31.63" r="0.28" fill="#efe4cc"/>
<rect x="33.56" y="38.15" width="1.36" height="2.7" rx="0.68" ry="0.68" fill="#c3a77a" stroke="#263a14" stroke-width="0.12"/>
<ellipse cx="34.24" cy="39.5" rx="0.4" ry="0.8" fill="#dcc8a0"/>
<circle cx="34.24" cy="39.5" r="0.28" fill="#efe4cc"/>
<rect x="36.1" y="30.28" width="1.36" height="2.7" rx="0.68" ry="0.68" fill="#c3a77a" stroke="#263a14" stroke-width="0.12"/>
<ellipse cx="36.78" cy="31.63" rx="0.4" ry="0.8" fill="#dcc8a0"/>
<circle cx="36.78" cy="31.63" r="0.28" fill="#efe4cc"/>
<rect x="36.1" y="38.15" width="1.36" height="2.7" rx="0.68" ry="0.68" fill="#c3a77a" stroke="#263a14" stroke-width="0.12"/>
<ellipse cx="36.78" cy="39.5" rx="0.4" ry="0.8" fill="#dcc8a0"/>
<circle cx="36.78" cy="39.5" r="0.28" fill="#efe4cc"/>
<rect x="38.64" y="30.28" width="1.36" height="2.7" rx="0.68" ry="0.68" fill="#c3a77a" stroke="#263a14" stroke-width="0.12"/>
<ellipse cx="39.32" cy="31.63" rx="0.4" ry="0.8" fill="#dcc8a0"/>
<circle cx="39.32" cy="31.63" r="0.28" fill="#efe4cc"/>
<rect x="38.64" y="38.15" width="1.36" height="2.7" rx="0.68" ry="0.68" fill="#c3a77a" stroke="#263a14" stroke-width="0.12"/>
<ellipse cx="39.32" cy="39.5" rx="0.4" ry="0.8" fill="#dcc8a0"/>
<circle cx="39.32" cy="39.5" r="0.28" fill="#efe4cc"/>
<rect x="41.18" y="30.28" width="1.36" height="2.7" rx="0.68" ry="0.68" fill="#c3a77a" stroke="#263a14" stroke-width="0.12"/>
<ellipse cx="41.86" cy="31.63" rx="0.4" ry="0.8" fill="#dcc8a0"/>
<circle cx="41.86" cy="31.63" r="0.28" fill="#efe4cc"/>
<rect x="41.18" y="38.15" width="1.36" height="2.7" rx="0.68" ry="0.68" fill="#c3a77a" stroke="#263a14" stroke-width="0.12"/>
<ellipse cx="41.86" cy="39.5" rx="0.4" ry="0.8" fill="#dcc8a0"/>
<circle cx="41.86" cy="39.5" r="0.28" fill="#efe4cc"/>
<rect x="43.72" y="30.28" width="1.36" height="2.7" rx="0.68" ry="0.68" fill="#c3a77a" stroke="#263a14" stroke-width="0.12"/>
<ellipse cx="44.4" cy="31.63" rx="0.4" ry="0.8" fill="#dcc8a0"/>
<circle cx="44.4" cy="31.63" r="0.28" fill="#efe4cc"/>
<rect x="43.72" y="38.15" width="1.36" height="2.7" rx="0.68" ry="0.68" fill="#c3a77a" stroke="#263a14" stroke-width="0.12"/>
<ellipse cx="44.4" cy="39.5" rx="0.4" ry="0.8" fill="#dcc8a0"/>
<circle cx="44.4" cy="39.5" r="0.28" fill="#efe4cc"/>
<rect x="46.26" y="30.28" width="1.36" height="2.7" rx="0.68" ry="0.68" fill="#c3a77a" stroke="#263a14" stroke-width="0.12"/>
<ellipse cx="46.94" cy="31.63" rx="0.4" ry="0.8" fill="#dcc8a0"/>
<circle cx="46.94" cy="31.63" r="0.28" fill="#efe4cc"/>
<rect x="46.26" y="38.15" width="1.36" height="2.7" rx="0.68" ry="0.68" fill="#c3a77a" stroke="#263a14" stroke-width="0.12"/>
<ellipse cx="46.94" cy="39.5" rx="0.4" ry="0.8" fill="#dcc8a0"/>
<circle cx="46.94" cy="39.5" r="0.28" fill="#efe4cc"/>
<rect x="48.8" y="30.28" width="1.36" height="2.7" rx="0.68" ry="0.68" fill="#c3a77a" stroke="#263a14" stroke-width="0.12"/>
<ellipse cx="49.48" cy="31.63" rx="0.4" ry="0.8" fill="#dcc8a0"/>
<circle cx="49.48" cy="31.63" r="0.28" fill="#efe4cc"/>
<rect x="48.8" y="38.15" width="1.36" height="2.7" rx="0.68" ry="0.68" fill="#c3a77a" stroke="#263a14" stroke-width="0.12"/>
<ellipse cx="49.48" cy="39.5" rx="0.4" ry="0.8" fill="#dcc8a0"/>
<circle cx="49.48" cy="39.5" r="0.28" fill="#efe4cc"/>
<circle cx="15.22" cy="50.62" r="1.45" fill="#c3a77a" stroke="#263a14" stroke-width="0.14"/>
<circle cx="15.22" cy="50.62" r="0.797" fill="#dcc8a0"/>
<circle cx="15.22" cy="50.62" r="0.45" fill="#f6f2ea"/>
<circle cx="19.19" cy="51.59" r="1.45" fill="#c3a77a" stroke="#263a14" stroke-width="0.14"/>
<circle cx="19.19" cy="51.59" r="0.797" fill="#dcc8a0"/>
<circle cx="19.19" cy="51.59" r="0.45" fill="#f6f2ea"/>
<circle cx="21" cy="55.08" r="1.45" fill="#c3a77a" stroke="#263a14" stroke-width="0.14"/>
<circle cx="21" cy="55.08" r="0.797" fill="#dcc8a0"/>
<circle cx="21" cy="55.08" r="0.45" fill="#f6f2ea"/>
<circle cx="21" cy="59.65" r="1.45" fill="#c3a77a" stroke="#263a14" stroke-width="0.14"/>
<circle cx="21" cy="59.65" r="0.797" fill="#dcc8a0"/>
<circle cx="21" cy="59.65" r="0.45" fill="#f6f2ea"/>
<circle cx="21" cy="64.1" r="1.45" fill="#c3a77a" stroke="#263a14" stroke-width="0.14"/>
<circle cx="21" cy="64.1" r="0.797" fill="#dcc8a0"/>
<circle cx="21" cy="64.1" r="0.45" fill="#f6f2ea"/>
<circle cx="19.19" cy="67.47" r="1.45" fill="#c3a77a" stroke="#263a14" stroke-width="0.14"/>
<circle cx="19.19" cy="67.47" r="0.797" fill="#dcc8a0"/>
<circle cx="19.19" cy="67.47" r="0.45" fill="#f6f2ea"/>
<circle cx="15.22" cy="68.68" r="1.45" fill="#c3a77a" stroke="#263a14" stroke-width="0.14"/>
<circle cx="15.22" cy="68.68" r="0.797" fill="#dcc8a0"/>
<circle cx="15.22" cy="68.68" r="0.45" fill="#f6f2ea"/>
<circle cx="11.25" cy="67.47" r="1.45" fill="#c3a77a" stroke="#263a14" stroke-width="0.14"/>
<circle cx="11.25" cy="67.47" r="0.797" fill="#dcc8a0"/>
<circle cx="11.25" cy="67.47" r="0.45" fill="#f6f2ea"/>
<circle cx="9.44" cy="64.1" r="1.45" fill="#c3a77a" stroke="#263a14" stroke-width="0.14"/>
<circle cx="9.44" cy="64.1" r="0.797" fill="#dcc8a0"/>
<circle cx="9.44" cy="64.1" r="0.45" fill="#f6f2ea"/>
<circle cx="9.44" cy="59.65" r="1.45" fill="#c3a77a" stroke="#263a14" stroke-width="0.14"/>
<circle cx="9.44" cy="59.65" r="0.797" fill="#dcc8a0"/>
<circle cx="9.44" cy="59.65" r="0.45" fill="#f6f2ea"/>
<circle cx="9.44" cy="55.08" r="1.45" fill="#c3a77a" stroke="#263a14" stroke-width="0.14"/>
<circle cx="9.44" cy="55.08" r="0.797" fill="#dcc8a0"/>
<circle cx="9.44" cy="55.08" r="0.45" fill="#f6f2ea"/>
<circle cx="11.25" cy="51.59" r="1.45" fill="#c3a77a" stroke="#263a14" stroke-width="0.14"/>
<circle cx="11.25" cy="51.59" r="0.797" fill="#dcc8a0"/>
<circle cx="11.25" cy="51.59" r="0.45" fill="#f6f2ea"/>
<circle cx="15.22" cy="59.65" r="2.45" fill="#e6f2fc" stroke="#203010" stroke-width="0.2"/>
<circle cx="40.62" cy="50.62" r="1.45" fill="#c3a77a" stroke="#263a14" stroke-width="0.14"/>
<circle cx="40.62" cy="50.62" r="0.797" fill="#dcc8a0"/>
<circle cx="40.62" cy="50.62" r="0.45" fill="#f6f2ea"/>
<circle cx="44.59" cy="51.59" r="1.45" fill="#c3a77a" stroke="#263a14" stroke-width="0.14"/>
<circle cx="44.59" cy="51.59" r="0.797" fill="#dcc8a0"/>
<circle cx="44.59" cy="51.59" r="0.45" fill="#f6f2ea"/>
<circle cx="46.4" cy="55.08" r="1.45" fill="#c3a77a" stroke="#263a14" stroke-width="0.14"/>
<circle cx="46.4" cy="55.08" r="0.797" fill="#dcc8a0"/>
<circle cx="46.4" cy="55.08" r="0.45" fill="#f6f2ea"/>
<circle cx="46.4" cy="59.65" r="1.45" fill="#c3a77a" stroke="#263a14" stroke-width="0.14"/>
<circle cx="46.4" cy="59.65" r="0.797" fill="#dcc8a0"/>
<circle cx="46.4" cy="59.65" r="0.45" fill="#f6f2ea"/>
<circle cx="46.4" cy="64.1" r="1.45" fill="#c3a77a" stroke="#263a14" stroke-width="0.14"/>
<circle cx="46.4" cy="64.1" r="0.797" fill="#dcc8a0"/>
<circle cx="46.4" cy="64.1" r="0.45" fill="#f6f2ea"/>
<circle cx="44.59" cy="67.47" r="1.45" fill="#c3a77a" stroke="#263a14" stroke-width="0.14"/>
<circle cx="44.59" cy="67.47" r="0.797" fill="#dcc8a0"/>
<circle cx="44.59" cy="67.47" r="0.45" fill="#f6f2ea"/>
<circle cx="40.62" cy="68.68" r="1.45" fill="#c3a77a" stroke="#263a14" stroke-width="0.14"/>
<circle cx="40.62" cy="68.68" r="0.797" fill="#dcc8a0"/>
<circle cx="40.62" cy="68.68" r="0.45" fill="#f6f2ea"/>
<circle cx="36.65" cy="67.47" r="1.45" fill="#c3a77a" stroke="#263a14" stroke-width="0.14"/>
<circle cx="36.65" cy="67.47" r="0.797" fill="#dcc8a0"/>
<circle cx="36.65" cy="67.47" r="0.45" fill="#f6f2ea"/>
<circle cx="34.84" cy="64.1" r="1.45" fill="#c3a77a" stroke="#263a14" stroke-width="0.14"/>
<circle cx="34.84" cy="64.1" r="0.797" fill="#dcc8a0"/>
<circle cx="34.84" cy="64.1" r="0.45" fill="#f6f2ea"/>
<circle cx="34.84" cy="59.65" r="1.45" fill="#c3a77a" stroke="#263a14" stroke-width="0.14"/>
<circle cx="34.84" cy="59.65" r="0.797" fill="#dcc8a0"/>
<circle cx="34.84" cy="59.65" r="0.45" fill="#f6f2ea"/>
<circle cx="34.84" cy="55.08" r="1.45" fill="#c3a77a" stroke="#263a14" stroke-width="0.14"/>
<circle cx="34.84" cy="55.08" r="0.797" fill="#dcc8a0"/>
<circle cx="34.84" cy="55.08" r="0.45" fill="#f6f2ea"/>
<circle cx="36.65" cy="51.59" r="1.45" fill="#c3a77a" stroke="#263a14" stroke-width="0.14"/>
<circle cx="36.65" cy="51.59" r="0.797" fill="#dcc8a0"/>
<circle cx="36.65" cy="51.59" r="0.45" fill="#f6f2ea"/>
<circle cx="40.62" cy="59.65" r="2.45" fill="#e6f2fc" stroke="#203010" stroke-width="0.2"/>
<rect x="2.42" y="2.44" width="53.6" height="23.1" fill="none" stroke="#e8efc4" stroke-width="0.27"/>
<rect x="3.68" y="5.0" width="51.0" height="2.7" fill="none" stroke="#e8efc4" stroke-width="0.27"/>
<rect x="3.68" y="20.25" width="51.0" height="2.7" fill="none" stroke="#e8efc4" stroke-width="0.27"/>
<path d="M6.35,5v2.7M6.35,20.25v2.7" fill="none" stroke="#e8efc4" stroke-width="0.27"/>
<text x="2.33" y="27.2" font-size="1.55" fill="#eef2d0" text-anchor="start" font-weight="normal" font-family="Liberation Sans" textLength="1.76" lengthAdjust="spacingAndGlyphs" stroke="#eef2d0" stroke-width="0.06">U2</text>
<path d="M5.19,31.6 V39.65 M25.25,31.1 V39.65" fill="none" stroke="#e8efc4" stroke-width="0.27"/>
<path d="M25.25,34.0 A1.55,1.55 0 0 0 25.25,37.1" fill="none" stroke="#e8efc4" stroke-width="0.27"/>
<circle cx="25.29" cy="31.0" r="0.35" fill="#f0f0e0"/>
<text x="0" y="0" transform="translate(26.54,35.65) rotate(90)" font-size="1.55" fill="#eef2d0" text-anchor="middle" dominant-baseline="central" font-weight="normal" font-family="Liberation Sans" textLength="1.7" lengthAdjust="spacingAndGlyphs" stroke="#eef2d0" stroke-width="0.06">U3</text>
<text x="15.19" y="43.3" font-size="1.55" fill="#eef2d0" text-anchor="middle" font-weight="normal" font-family="Liberation Sans" textLength="2.7" lengthAdjust="spacingAndGlyphs" stroke="#eef2d0" stroke-width="0.06">DS1</text>
<path d="M30.59,31.6 V39.65 M50.65,31.1 V39.65" fill="none" stroke="#e8efc4" stroke-width="0.27"/>
<path d="M50.65,34.0 A1.55,1.55 0 0 0 50.65,37.1" fill="none" stroke="#e8efc4" stroke-width="0.27"/>
<circle cx="50.69" cy="31.0" r="0.35" fill="#f0f0e0"/>
<text x="0" y="0" transform="translate(51.94,35.65) rotate(90)" font-size="1.55" fill="#eef2d0" text-anchor="middle" dominant-baseline="central" font-weight="normal" font-family="Liberation Sans" textLength="1.7" lengthAdjust="spacingAndGlyphs" stroke="#eef2d0" stroke-width="0.06">U4</text>
<text x="40.59" y="43.3" font-size="1.55" fill="#eef2d0" text-anchor="middle" font-weight="normal" font-family="Liberation Sans" textLength="2.7" lengthAdjust="spacingAndGlyphs" stroke="#eef2d0" stroke-width="0.06">DS2</text>
<path d="M4.640,50.588 A12.0,12.0 0 0 1 25.800,50.588 L25.800,68.812 A12.0,12.0 0 0 1 4.640,68.812 Z" fill="none" stroke="#e8efc4" stroke-width="0.27"/>
<path d="M16.47,63.0 L17.42,65.0" stroke="#f0f0e0" stroke-width="0.22"/>
<path d="M17.52,65.3 L16.77,64.5 L17.57,64.15 Z" fill="#f0f0e0"/>
<path d="M30.040,50.588 A12.0,12.0 0 0 1 51.200,50.588 L51.200,68.812 A12.0,12.0 0 0 1 30.040,68.812 Z" fill="none" stroke="#e8efc4" stroke-width="0.27"/>
<path d="M41.87,63.0 L42.82,65.0" stroke="#f0f0e0" stroke-width="0.22"/>
<path d="M42.92,65.3 L42.17,64.5 L42.97,64.15 Z" fill="#f0f0e0"/>
<rect x="53.3" y="10.1" width="4.0" height="7.7" fill="none" stroke="#e8efc4" stroke-width="0.27"/>
<text x="0" y="0" transform="translate(54.9,13.97) rotate(-90)" font-size="1.45" fill="#eef2d0" text-anchor="middle" dominant-baseline="central" font-weight="normal" font-family="Liberation Sans" textLength="2.85" lengthAdjust="spacingAndGlyphs" stroke="#eef2d0" stroke-width="0.06">USB</text>
<circle cx="58.0" cy="6.34" r="1.2" fill="#dfe9f6" stroke="#1c3010" stroke-width="0.3"/>
<circle cx="74.3" cy="4.52" r="1.1" fill="#f4f8fc" stroke="#1c3010" stroke-width="0.2"/>
<circle cx="3.0" cy="76.95" r="1.1" fill="#f4f8fc" stroke="#1c3010" stroke-width="0.3"/>
<circle cx="96.9" cy="76.95" r="1.1" fill="#f4f8fc" stroke="#1c3010" stroke-width="0.3"/>
<rect x="60.2" y="2.53" width="37.2" height="45.07" fill="none" stroke="#e8efc4" stroke-width="0.27"/>
<text x="96.3" y="49.4" font-size="1.55" fill="#eef2d0" text-anchor="middle" font-weight="normal" font-family="Liberation Sans" textLength="1.8" lengthAdjust="spacingAndGlyphs" stroke="#eef2d0" stroke-width="0.06">U1</text>
<rect x="64.2" y="11.65" width="1.6" height="2.7" rx="0.8" ry="0.8" fill="#c3a77a" stroke="#263a14" stroke-width="0.1"/>
<ellipse cx="65" cy="13" rx="0.48" ry="0.81" fill="#dcc8a0"/>
<rect x="66.75" y="11.65" width="1.6" height="2.7" rx="0.8" ry="0.8" fill="#c3a77a" stroke="#263a14" stroke-width="0.1"/>
<ellipse cx="67.55" cy="13" rx="0.48" ry="0.81" fill="#dcc8a0"/>
<rect x="63.8" y="36.35" width="1.6" height="2.7" rx="0.8" ry="0.8" fill="#c3a77a" stroke="#263a14" stroke-width="0.1"/>
<ellipse cx="64.6" cy="37.7" rx="0.48" ry="0.81" fill="#dcc8a0"/>
<rect x="66.3" y="36.35" width="1.6" height="2.7" rx="0.8" ry="0.8" fill="#c3a77a" stroke="#263a14" stroke-width="0.1"/>
<ellipse cx="67.1" cy="37.7" rx="0.48" ry="0.81" fill="#dcc8a0"/>
<rect x="68.9" y="36.35" width="1.6" height="2.7" rx="0.8" ry="0.8" fill="#c3a77a" stroke="#263a14" stroke-width="0.1"/>
<ellipse cx="69.7" cy="37.7" rx="0.48" ry="0.81" fill="#dcc8a0"/>
<text x="0" y="0" transform="translate(65.14,16.88) rotate(-90)" font-size="1.75" fill="#eef2d0" text-anchor="middle" dominant-baseline="central" font-weight="normal" font-family="Liberation Sans" textLength="2.64" lengthAdjust="spacingAndGlyphs" stroke="#eef2d0" stroke-width="0.06">GND</text>
<text x="0" y="0" transform="translate(67.54,16.7) rotate(-90)" font-size="1.75" fill="#eef2d0" text-anchor="middle" dominant-baseline="central" font-weight="normal" font-family="Liberation Sans" textLength="2.9" lengthAdjust="spacingAndGlyphs" stroke="#eef2d0" stroke-width="0.06">Out</text>
<text x="0" y="0" transform="translate(67.54,22.52) rotate(-90)" font-size="1.75" fill="#eef2d0" text-anchor="middle" dominant-baseline="central" font-weight="normal" font-family="Liberation Sans" textLength="6.8" lengthAdjust="spacingAndGlyphs" stroke="#eef2d0" stroke-width="0.06">85-235V</text>
<text x="0" y="0" transform="translate(65.14,34.06) rotate(-90)" font-size="1.75" fill="#eef2d0" text-anchor="middle" dominant-baseline="central" font-weight="normal" font-family="Liberation Sans" textLength="2.8" lengthAdjust="spacingAndGlyphs" stroke="#eef2d0" stroke-width="0.06">GND</text>
<text x="0" y="0" transform="translate(67.18,33.5) rotate(-90)" font-size="1.75" fill="#eef2d0" text-anchor="middle" dominant-baseline="central" font-weight="normal" font-family="Liberation Sans" textLength="3.9" lengthAdjust="spacingAndGlyphs" stroke="#eef2d0" stroke-width="0.06">SHDN</text>
<text x="0" y="0" transform="translate(69.8,31.26) rotate(-90)" font-size="1.75" fill="#eef2d0" text-anchor="middle" dominant-baseline="central" font-weight="normal" font-family="Liberation Sans" textLength="8.4" lengthAdjust="spacingAndGlyphs" stroke="#eef2d0" stroke-width="0.06">12-24V IN</text>
<rect x="57.46" y="18.98" width="2.04" height="5.45" fill="none" stroke="#e8efc4" stroke-width="0.22"/>
<rect x="57.71" y="19.23" width="1.54" height="2.289" fill="#8f8d80"/>
<rect x="57.71" y="21.891" width="1.54" height="2.289" fill="#8f8d80"/>
<rect x="57.96" y="21.541" width="1.04" height="0.327" fill="#1a2a10"/>
<rect x="57.43" y="34.69" width="1.97" height="5.44" fill="none" stroke="#e8efc4" stroke-width="0.22"/>
<rect x="57.68" y="34.94" width="1.47" height="2.285" fill="#8f8d80"/>
<rect x="57.68" y="37.595" width="1.47" height="2.285" fill="#8f8d80"/>
<rect x="57.93" y="37.247" width="0.97" height="0.326" fill="#1a2a10"/>
<rect x="53.7" y="41.1" width="2.04" height="5.56" fill="none" stroke="#e8efc4" stroke-width="0.22"/>
<rect x="53.95" y="41.35" width="1.54" height="2.335" fill="#8f8d80"/>
<rect x="53.95" y="44.075" width="1.54" height="2.335" fill="#8f8d80"/>
<rect x="54.2" y="43.713" width="1.04" height="0.334" fill="#1a2a10"/>
<rect x="58" y="56.2" width="2.2" height="5.65" fill="none" stroke="#e8efc4" stroke-width="0.22"/>
<rect x="58.25" y="56.45" width="1.7" height="2.373" fill="#8f8d80"/>
<rect x="58.25" y="59.227" width="1.7" height="2.373" fill="#8f8d80"/>
<rect x="58.5" y="58.855" width="1.2" height="0.339" fill="#1a2a10"/>
<text x="0" y="0" transform="translate(58.5,17.9) rotate(-90)" font-size="1.5" fill="#eef2d0" text-anchor="middle" dominant-baseline="central" font-weight="normal" font-family="Liberation Sans" textLength="1.7" lengthAdjust="spacingAndGlyphs" stroke="#eef2d0" stroke-width="0.06">C4</text>
<text x="58.4" y="42.1" font-size="1.55" fill="#eef2d0" text-anchor="middle" font-weight="normal" font-family="Liberation Sans" textLength="1.8" lengthAdjust="spacingAndGlyphs" stroke="#eef2d0" stroke-width="0.06">C1</text>
<text x="54.7" y="40.6" font-size="1.55" fill="#eef2d0" text-anchor="middle" font-weight="normal" font-family="Liberation Sans" textLength="1.8" lengthAdjust="spacingAndGlyphs" stroke="#eef2d0" stroke-width="0.06">C2</text>
<text x="59.1" y="63.6" font-size="1.55" fill="#eef2d0" text-anchor="middle" font-weight="normal" font-family="Liberation Sans" textLength="1.8" lengthAdjust="spacingAndGlyphs" stroke="#eef2d0" stroke-width="0.06">C3</text>
<rect x="53.14" y="26.84" width="3.81" height="6.71" fill="none" stroke="#e8efc4" stroke-width="0.27"/>
<rect x="56.95" y="27.26" width="2.3" height="1.0" fill="#8f8d80"/>
<rect x="56.95" y="29.68" width="2.3" height="1.0" fill="#8f8d80"/>
<rect x="56.95" y="31.9" width="2.3" height="1.0" fill="#8f8d80"/>
<rect x="51.15" y="28.53" width="2.17" height="3.27" fill="#8f8d80"/>
<text x="54.2" y="35.3" font-size="1.55" fill="#eef2d0" text-anchor="middle" font-weight="normal" font-family="Liberation Sans" textLength="1.8" lengthAdjust="spacingAndGlyphs" stroke="#eef2d0" stroke-width="0.06">U7</text>
<rect x="55.55" y="47.4" width="3.43" height="2.15" fill="#8f8d80"/>
<rect x="53.8" y="49.6" width="6.8" height="3.9" fill="none" stroke="#e8efc4" stroke-width="0.27"/>
<rect x="54.2" y="53.2" width="1.2" height="2.3" fill="#8f8d80"/>
<rect x="56.6" y="53.2" width="1.2" height="2.3" fill="#8f8d80"/>
<rect x="59" y="53.2" width="1.2" height="2.3" fill="#8f8d80"/>
<text x="55.5" y="57.6" font-size="1.55" fill="#eef2d0" text-anchor="middle" font-weight="normal" font-family="Liberation Sans" textLength="1.8" lengthAdjust="spacingAndGlyphs" stroke="#eef2d0" stroke-width="0.06">U8</text>
<rect x="66.4" y="39.5" width="0.9" height="1.3" fill="#8f8d80"/><rect x="68.0" y="39.5" width="0.9" height="1.3" fill="#8f8d80"/>
<rect x="67.0" y="39.3" width="1.3" height="1.7" fill="none" stroke="#e8efc4" stroke-width="0.15"/>
<text x="67.6" y="43" font-size="1.55" fill="#eef2d0" text-anchor="middle" font-weight="normal" font-family="Liberation Sans" textLength="1.8" lengthAdjust="spacingAndGlyphs" stroke="#eef2d0" stroke-width="0.06">R3</text>
<rect x="72.7" y="53.2" width="7.3" height="13.1" fill="none" stroke="#e8efc4" stroke-width="0.27"/>
<ellipse cx="76.3" cy="55.0" rx="2.1" ry="1.7" fill="#c3a77a" stroke="#263a14" stroke-width="0.12"/>
<circle cx="76.3" cy="55.0" r="1.05" fill="#eef6fc"/>
<ellipse cx="76.3" cy="59.7" rx="2.1" ry="1.7" fill="#c3a77a" stroke="#263a14" stroke-width="0.12"/>
<circle cx="76.3" cy="59.7" r="1.05" fill="#eef6fc"/>
<ellipse cx="76.3" cy="64.4" rx="2.1" ry="1.7" fill="#c3a77a" stroke="#263a14" stroke-width="0.12"/>
<circle cx="76.3" cy="64.4" r="1.05" fill="#eef6fc"/>
<text x="76.3" y="52.9" font-size="1.55" fill="#eef2d0" text-anchor="middle" font-weight="normal" font-family="Liberation Sans" textLength="1.8" lengthAdjust="spacingAndGlyphs" stroke="#eef2d0" stroke-width="0.06">S1</text>
<rect x="55.1" y="69.1" width="10.6" height="5.5" fill="none" stroke="#e8efc4" stroke-width="0.27"/>
<rect x="55.825" y="69.7" width="1.35" height="1.6" rx="0.675" ry="0.675" fill="#c3a77a" stroke="#263a14" stroke-width="0.1"/>
<ellipse cx="56.5" cy="70.5" rx="0.405" ry="0.48" fill="#dcc8a0"/>
<rect x="55.825" y="72.4" width="1.35" height="1.6" rx="0.675" ry="0.675" fill="#c3a77a" stroke="#263a14" stroke-width="0.1"/>
<ellipse cx="56.5" cy="73.2" rx="0.405" ry="0.48" fill="#dcc8a0"/>
<rect x="58.425" y="69.7" width="1.35" height="1.6" rx="0.675" ry="0.675" fill="#c3a77a" stroke="#263a14" stroke-width="0.1"/>
<ellipse cx="59.1" cy="70.5" rx="0.405" ry="0.48" fill="#dcc8a0"/>
<rect x="58.425" y="72.4" width="1.35" height="1.6" rx="0.675" ry="0.675" fill="#c3a77a" stroke="#263a14" stroke-width="0.1"/>
<ellipse cx="59.1" cy="73.2" rx="0.405" ry="0.48" fill="#dcc8a0"/>
<rect x="60.925" y="69.7" width="1.35" height="1.6" rx="0.675" ry="0.675" fill="#c3a77a" stroke="#263a14" stroke-width="0.1"/>
<ellipse cx="61.6" cy="70.5" rx="0.405" ry="0.48" fill="#dcc8a0"/>
<rect x="60.925" y="72.4" width="1.35" height="1.6" rx="0.675" ry="0.675" fill="#c3a77a" stroke="#263a14" stroke-width="0.1"/>
<ellipse cx="61.6" cy="73.2" rx="0.405" ry="0.48" fill="#dcc8a0"/>
<rect x="63.525" y="69.7" width="1.35" height="1.6" rx="0.675" ry="0.675" fill="#c3a77a" stroke="#263a14" stroke-width="0.1"/>
<ellipse cx="64.2" cy="70.5" rx="0.405" ry="0.48" fill="#dcc8a0"/>
<rect x="63.525" y="72.4" width="1.35" height="1.6" rx="0.675" ry="0.675" fill="#c3a77a" stroke="#263a14" stroke-width="0.1"/>
<ellipse cx="64.2" cy="73.2" rx="0.405" ry="0.48" fill="#dcc8a0"/>
<text x="60.3" y="68.6" font-size="1.55" fill="#eef2d0" text-anchor="middle" font-weight="normal" font-family="Liberation Sans" textLength="1.8" lengthAdjust="spacingAndGlyphs" stroke="#eef2d0" stroke-width="0.06">U6</text>
<text x="93.7" y="50.3" font-size="2.2" fill="#c6b27a" text-anchor="end" font-weight="bold" font-family="Liberation Sans" textLength="4.97" lengthAdjust="spacingAndGlyphs" stroke="#c6b27a" stroke-width="0.05">Nixie</text>
<text x="93.7" y="53" font-size="2.2" fill="#c6b27a" text-anchor="end" font-weight="bold" font-family="Liberation Sans" textLength="8.08" lengthAdjust="spacingAndGlyphs" stroke="#c6b27a" stroke-width="0.05">Counter</text>
<text x="93.7" y="55.7" font-size="2.2" fill="#c6b27a" text-anchor="end" font-weight="bold" font-family="Liberation Sans" textLength="4.2" lengthAdjust="spacingAndGlyphs" stroke="#c6b27a" stroke-width="0.05">v1.1</text>
<text x="74.3" y="71.6" font-size="1.3" fill="#c6b27a" text-anchor="start" font-weight="bold" font-family="Liberation Sans" textLength="4.9" lengthAdjust="spacingAndGlyphs" stroke="#c6b27a" stroke-width="0.03">Made At</text>
<text x="74.3" y="72.9" font-size="1.3" fill="#c6b27a" text-anchor="start" font-weight="bold" font-family="Liberation Sans" textLength="6.2" lengthAdjust="spacingAndGlyphs" stroke="#c6b27a" stroke-width="0.03">Coredump</text>
<text x="76.2" y="75.8" font-size="1.3" fill="#c6b27a" text-anchor="start" font-weight="bold" font-family="Liberation Sans" textLength="7" lengthAdjust="spacingAndGlyphs" stroke="#c6b27a" stroke-width="0.03">Made With</text>
<text x="76.2" y="77.1" font-size="1.3" fill="#c6b27a" text-anchor="start" font-weight="bold" font-family="Liberation Sans" textLength="6.2" lengthAdjust="spacingAndGlyphs" stroke="#c6b27a" stroke-width="0.03">LibrePCB</text>
<rect x="73.0" y="75.0" width="1.9" height="1.9" fill="#c6b27a" opacity="0.7"/>
<path d="M72.5,74.6v2.7M75.4,74.6v2.7M72.6,74.6h2.7M72.6,77.3h2.7" stroke="#c6b27a" stroke-width="0.12" stroke-dasharray="0.3 0.3"/>
<path d="M71.3,70.9v2.4M71.9,70.9v2.4M72.5,71.2v1.8M71.0,72.1h2.0" stroke="#c6b27a" stroke-width="0.16" opacity="0.8"/>
<rect x="85.44" y="57.4" width="1.99" height="3.7" fill="none" stroke="#e8efc4" stroke-width="0.2"/>
<rect x="85.69" y="57.7" width="1.49" height="1.4" fill="#8f8d80"/>
<rect x="85.69" y="59.4" width="1.49" height="1.4" fill="#8f8d80"/>
<rect x="93.18" y="57.4" width="1.9" height="3.7" fill="none" stroke="#e8efc4" stroke-width="0.2"/>
<rect x="93.43" y="57.7" width="1.4" height="1.4" fill="#8f8d80"/>
<rect x="93.43" y="59.4" width="1.4" height="1.4" fill="#8f8d80"/>
<rect x="88.07" y="57.4" width="1.67" height="1.0" fill="#8f8d80"/>
<rect x="88.07" y="59.8" width="1.67" height="1.0" fill="#8f8d80"/>
<rect x="88.27" y="58.4" width="1.27" height="1.4" fill="none" stroke="#e8efc4" stroke-width="0.15"/>
<rect x="95.76" y="57.4" width="1.71" height="1.0" fill="#8f8d80"/>
<rect x="95.76" y="59.8" width="1.71" height="1.0" fill="#8f8d80"/>
<rect x="95.96" y="58.4" width="1.31" height="1.4" fill="none" stroke="#e8efc4" stroke-width="0.15"/>
<text x="0" y="0" transform="translate(90.8,59.1) rotate(90)" font-size="1.4" fill="#eef2d0" text-anchor="middle" dominant-baseline="central" font-weight="normal" font-family="Liberation Sans" textLength="1.8" lengthAdjust="spacingAndGlyphs" stroke="#eef2d0" stroke-width="0.06">R1</text>
<text x="0" y="0" transform="translate(98.5,59.1) rotate(90)" font-size="1.4" fill="#eef2d0" text-anchor="middle" dominant-baseline="central" font-weight="normal" font-family="Liberation Sans" textLength="1.8" lengthAdjust="spacingAndGlyphs" stroke="#eef2d0" stroke-width="0.06">R2</text>
<text x="86.5" y="63.2" font-size="1.55" fill="#eef2d0" text-anchor="middle" font-weight="normal" font-family="Liberation Sans" textLength="2.4" lengthAdjust="spacingAndGlyphs" stroke="#eef2d0" stroke-width="0.06">Pwr</text>
<text x="94.2" y="63.2" font-size="1.55" fill="#eef2d0" text-anchor="middle" font-weight="normal" font-family="Liberation Sans" textLength="2.6" lengthAdjust="spacingAndGlyphs" stroke="#eef2d0" stroke-width="0.06">WiFi</text>
<path d="M85.5,67.3 V65.4 H99.96 V74.45 H85.5 V72.3" fill="none" stroke="#e8efc4" stroke-width="0.27"/>
<circle cx="88.92" cy="65.05" r="2.2" fill="#c3a77a" stroke="#263a14" stroke-width="0.12"/>
<circle cx="88.92" cy="65.05" r="1.35" fill="#eef6fc"/>
<circle cx="85.8" cy="69.9" r="2.2" fill="#c3a77a" stroke="#263a14" stroke-width="0.12"/>
<circle cx="85.8" cy="69.9" r="1.35" fill="#eef6fc"/>
<circle cx="92.3" cy="69.9" r="2.2" fill="#c3a77a" stroke="#263a14" stroke-width="0.12"/>
<circle cx="92.3" cy="69.9" r="1.35" fill="#eef6fc"/>
<text x="98.3" y="64.5" font-size="1.55" fill="#eef2d0" text-anchor="middle" font-weight="normal" font-family="Liberation Sans" textLength="1.8" lengthAdjust="spacingAndGlyphs" stroke="#eef2d0" stroke-width="0.06">J1</text>
</g></svg></div>
<div class="a" style="left:1646px;top:112px;width:274px;height:21px;background:#dadada;border-top:1px solid #c4c4c4;border-bottom:1px solid #c4c4c4"></div>
<div class="t" style="left:1651px;top:117px;font-size:12px">DRC [0]</div>
<svg class="a" style="left:1880px;top:116px" width="12" height="12"><rect x="4.5" y="1.5" width="6" height="6" fill="none" stroke="#111" stroke-width="1.2"/><rect x="1.5" y="4.5" width="6" height="6" fill="#dadada" stroke="#111" stroke-width="1.2"/></svg>
<svg class="a" style="left:1902px;top:117px" width="11" height="11"><path d="M1.5,1.5L9.5,9.5M9.5,1.5L1.5,9.5" stroke="#111" stroke-width="1.8"/></svg>
<div class="a" style="left:1646px;top:134px;width:273px;height:847px;background:#f2f2f2;border:1px solid #7a7a7a;border-right-color:#c8c8c8"></div>
<div class="t" style="left:1651px;top:139px;font-size:12px;color:#6d6d6d">Looks good so far :-)</div>
<div class="a" style="left:1647px;top:983px;width:13px;height:13px;background:#fff;border:1px solid #333"></div>
<svg class="a" style="left:1647px;top:983px" width="13" height="13"><path d="M2.5,6.5L5,9.5L10.5,3" fill="none" stroke="#222" stroke-width="1.3"/></svg>
<div class="t" style="left:1663px;top:985px;font-size:11.5px">Zoom to location</div>
<div class="a" style="left:1646px;top:998px;width:274px;height:1px;background:#8a8a8a"></div>
<div class="a" style="left:1865px;top:983px;width:17px;height:15px;border:1px solid #c8c8c8;background:#f0f0f0"></div>
<svg class="a" style="left:1868px;top:984px" width="10" height="13"><path d="M6,1L3,7H5L4,12L8,5H6L7,1Z" fill="#e8c820"/></svg>
<div class="a" style="left:1884px;top:983px;width:17px;height:15px;border:1px solid #c8c8c8;background:#f0f0f0"></div>
<svg class="a" style="left:1886px;top:984px" width="13" height="13"><rect x="2" y="1.5" width="9" height="10" fill="#fff" stroke="#333" stroke-width="1"/><path d="M4,5h5M4,8h5" stroke="#333" stroke-width="0.8"/></svg>
<svg class="a" style="left:1902px;top:983px" width="16" height="16"><path d="M2,14L8,5L14,14" fill="none" stroke="#c02828" stroke-width="2.2"/><path d="M2,14L6,9" stroke="#2060c0" stroke-width="2.2"/></svg>
<div class="a" style="left:1648px;top:1000px;width:270px;height:19px;background:#f0f0f0"></div>
<div class="a" style="left:1648px;top:1001px;width:104px;height:18px;background:#f0f0f0;border-right:1px solid #d8d8d8"></div>
<div class="t" style="left:1648px;top:1004px;width:104px;text-align:center;font-size:11.5px">Place Devices ...</div>
<div class="a" style="left:1753px;top:1001px;width:47px;height:18px;background:#f0f0f0;border-right:1px solid #d8d8d8"></div>
<div class="t" style="left:1753px;top:1004px;width:47px;text-align:center;font-size:11.5px">Lay...</div>
<div class="a" style="left:1801px;top:1001px;width:57px;height:18px;background:#f0f0f0;border-right:1px solid #d8d8d8"></div>
<div class="t" style="left:1801px;top:1004px;width:57px;text-align:center;font-size:11.5px">ERC ...</div>
<div class="a" style="left:1859px;top:1000px;width:59px;height:20px;background:#ffffff;border-right:1px solid #d8d8d8"></div>
<div class="t" style="left:1859px;top:1004px;width:59px;text-align:center;font-size:11.5px">DRC ...</div>
<div class="t" style="left:1550px;top:1025px;font-size:11px">X:</div>
<div class="t" style="left:1578px;top:1025px;font-size:11px">48.354mm</div>
<div class="t" style="left:1633px;top:1025px;font-size:11px">Y:</div>
<div class="t" style="left:1663px;top:1025px;font-size:11px">42.551mm</div>
</body></html>
